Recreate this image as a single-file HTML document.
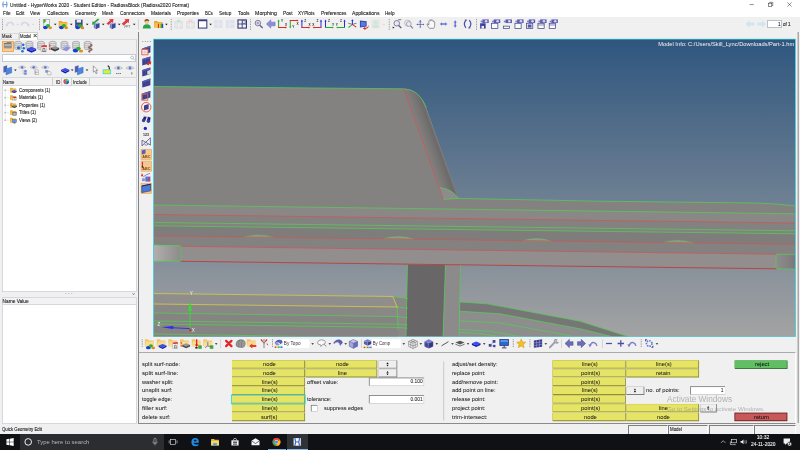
<!DOCTYPE html>
<html lang="en"><head><meta charset="utf-8"><title>Untitled - HyperWorks 2020 - Student Edition - RadiossBlock (Radioss2020 Format)</title>
<style>
html,body{margin:0;padding:0}
body{width:800px;height:450px;overflow:hidden;position:relative;background:#f0f0f0;font-family:"Liberation Sans",sans-serif}
.t{position:absolute;white-space:nowrap;line-height:1.15;transform-origin:0 50%;-webkit-text-stroke:0.1px currentColor}
.b{position:absolute;box-sizing:border-box}
svg{position:absolute;left:0;top:0;overflow:visible}
.yb{background:#e6e464;border-top:0.6px solid #f4f3b0;border-left:0.6px solid #f4f3b0;border-bottom:0.8px solid #8e8d3c;border-right:0.8px solid #8e8d3c}
.gb{background:#efefef;border-top:0.6px solid #fff;border-left:0.6px solid #fff;border-bottom:0.8px solid #777;border-right:0.8px solid #777}
.inp{background:#fff;border-top:0.8px solid #666;border-left:0.8px solid #666;border-bottom:0.6px solid #ddd;border-right:0.6px solid #ddd}
#root{position:absolute;left:0;top:0;width:800px;height:450px;will-change:transform}
</style></head><body><div id="root">
<div class="b" style="left:0px;top:0px;width:800px;height:17.2px;background:#ffffff;"></div>
<div class="t" style="left:10.30px;top:3.11px;font-size:5.2px;color:#1a1a1a;transform:scaleX(0.9302);">Untitled - HyperWorks 2020 - Student Edition - RadiossBlock (Radioss2020 Format)</div>
<div class="t" style="left:3.00px;top:11.31px;font-size:5.2px;color:#1a1a1a;transform:scaleX(0.8951);">File</div>
<div class="t" style="left:16.30px;top:11.31px;font-size:5.2px;color:#1a1a1a;transform:scaleX(0.9263);">Edit</div>
<div class="t" style="left:30.30px;top:11.31px;font-size:5.2px;color:#1a1a1a;transform:scaleX(0.9125);">View</div>
<div class="t" style="left:47.00px;top:11.31px;font-size:5.2px;color:#1a1a1a;transform:scaleX(0.9430);">Collectors</div>
<div class="t" style="left:74.50px;top:11.31px;font-size:5.2px;color:#1a1a1a;transform:scaleX(0.9418);">Geometry</div>
<div class="t" style="left:102.30px;top:11.31px;font-size:5.2px;color:#1a1a1a;transform:scaleX(0.9044);">Mesh</div>
<div class="t" style="left:120.00px;top:11.31px;font-size:5.2px;color:#1a1a1a;transform:scaleX(0.9401);">Connectors</div>
<div class="t" style="left:151.30px;top:11.31px;font-size:5.2px;color:#1a1a1a;transform:scaleX(0.9481);">Materials</div>
<div class="t" style="left:177.00px;top:11.31px;font-size:5.2px;color:#1a1a1a;transform:scaleX(0.9282);">Properties</div>
<div class="t" style="left:205.00px;top:11.31px;font-size:5.2px;color:#1a1a1a;transform:scaleX(0.8143);">BCs</div>
<div class="t" style="left:219.30px;top:11.31px;font-size:5.2px;color:#1a1a1a;transform:scaleX(0.9051);">Setup</div>
<div class="t" style="left:237.50px;top:11.31px;font-size:5.2px;color:#1a1a1a;transform:scaleX(0.9473);">Tools</div>
<div class="t" style="left:255.00px;top:11.31px;font-size:5.2px;color:#1a1a1a;transform:scaleX(1.0148);">Morphing</div>
<div class="t" style="left:283.00px;top:11.31px;font-size:5.2px;color:#1a1a1a;transform:scaleX(0.9130);">Post</div>
<div class="t" style="left:298.30px;top:11.31px;font-size:5.2px;color:#1a1a1a;transform:scaleX(0.8920);">XYPlots</div>
<div class="t" style="left:321.00px;top:11.31px;font-size:5.2px;color:#1a1a1a;transform:scaleX(0.9095);">Preferences</div>
<div class="t" style="left:352.00px;top:11.31px;font-size:5.2px;color:#1a1a1a;transform:scaleX(0.9807);">Applications</div>
<div class="t" style="left:385.30px;top:11.31px;font-size:5.2px;color:#1a1a1a;transform:scaleX(0.8883);">Help</div>
<div class="b" style="left:0px;top:39.2px;width:137.2px;height:385px;background:#f0f0f0;border-top:0.7px solid #d9dde3;border-right:0.7px solid #d0d4da;"></div>
<div class="b" style="left:0.8px;top:32.6px;width:18.5px;height:6.8px;background:#f0f0f0;border:0.6px solid #d9d9d9;border-bottom:none"></div>
<div class="b" style="left:19.2px;top:32.0px;width:19.2px;height:7.8px;background:#ffffff;border:0.6px solid #d0d0d0;border-bottom:none"></div>
<div class="t" style="left:1.80px;top:33.73px;font-size:5.0px;color:#222;transform:scaleX(0.8120);">Mask</div>
<div class="t" style="left:20.20px;top:33.73px;font-size:5.0px;color:#222;transform:scaleX(0.8224);">Model</div>
<div class="t" style="left:32.90px;top:31.95px;font-size:7.4px;color:#333;">×</div>
<div class="b" style="left:2.2px;top:40.7px;width:11.5px;height:11.2px;background:#f8cd96;border:0.7px solid #eeaa5c"></div>
<div class="b" style="left:1.8px;top:53.9px;width:134px;height:8.0px;background:#ffffff;border:0.7px solid #c3cad4"></div>
<div class="b" style="left:1.6px;top:77.2px;width:135px;height:8.6px;background:#f2f2f2;border:0.6px solid #d5d9df"></div>
<div class="b" style="left:51.5px;top:77.6px;width:0.6px;height:8px;background:#d0d0d0;"></div>
<div class="b" style="left:61.3px;top:77.6px;width:0.6px;height:8px;background:#d0d0d0;"></div>
<div class="b" style="left:71.0px;top:77.6px;width:0.6px;height:8px;background:#d0d0d0;"></div>
<div class="b" style="left:88.6px;top:77.6px;width:0.6px;height:8px;background:#d0d0d0;"></div>
<div class="t" style="left:2.80px;top:79.94px;font-size:4.8px;color:#222;transform:scaleX(0.8981);">Name</div>
<div class="t" style="left:56.00px;top:79.94px;font-size:4.8px;color:#222;transform:scaleX(0.8958);">ID</div>
<div class="t" style="left:73.20px;top:79.94px;font-size:4.8px;color:#222;transform:scaleX(0.9045);">Include</div>
<div class="b" style="left:1.6px;top:85.8px;width:135px;height:206.4px;background:#ffffff;border:0.6px solid #d5d9df;border-top:none"></div>
<div class="t" style="left:18.60px;top:87.61px;font-size:5.2px;color:#222;transform:scaleX(0.8368);">Components (1)</div>
<div class="t" style="left:18.60px;top:95.11px;font-size:5.2px;color:#222;transform:scaleX(0.8306);">Materials (1)</div>
<div class="t" style="left:18.60px;top:102.61px;font-size:5.2px;color:#222;transform:scaleX(0.8254);">Properties (1)</div>
<div class="t" style="left:18.60px;top:110.11px;font-size:5.2px;color:#222;transform:scaleX(0.8487);">Titles (1)</div>
<div class="t" style="left:18.60px;top:117.61px;font-size:5.2px;color:#222;transform:scaleX(0.8342);">Views (2)</div>
<div class="b" style="left:1.6px;top:292.2px;width:135px;height:4.6px;background:#f0f0f0;"></div>
<div class="t" style="left:65.00px;top:290.52px;font-size:5px;color:#555;">· · ·</div>
<div class="b" style="left:1.6px;top:296.6px;width:135px;height:8.6px;background:#f2f2f2;border:0.6px solid #d5d9df"></div>
<div class="t" style="left:2.60px;top:298.64px;font-size:4.8px;color:#222;">Name Value</div>
<div class="b" style="left:1.6px;top:305.2px;width:135px;height:119.2px;background:#ffffff;border:0.6px solid #d5d9df;border-top:none"></div>
<div class="b" style="left:138.1px;top:32px;width:0.9px;height:392px;background:#858585;"></div>
<svg width="800" height="450" viewBox="0 0 800 450">
<defs>
<linearGradient id="bg" x1="0" y1="0" x2="0" y2="1">
<stop offset="0" stop-color="#2f567f"/><stop offset="1" stop-color="#a3a3a3"/>
</linearGradient>
<linearGradient id="fil" gradientUnits="userSpaceOnUse" x1="422" y1="140" x2="436.2" y2="134.9">
<stop offset="0" stop-color="#838180"/><stop offset="0.5" stop-color="#777574"/><stop offset="0.85" stop-color="#6c6a69"/><stop offset="0.96" stop-color="#7b7978"/><stop offset="1" stop-color="#8e8c8b"/>
</linearGradient>
<linearGradient id="sb" x1="0" y1="0" x2="1" y2="0"><stop offset="0" stop-color="#b0afae"/><stop offset="1" stop-color="#8d8b8a"/></linearGradient>
<linearGradient id="sb2" x1="0" y1="0" x2="1" y2="0"><stop offset="0" stop-color="#8e8c8c"/><stop offset="1" stop-color="#7a7878"/></linearGradient>
<clipPath id="vp"><rect x="154" y="39.6" width="641" height="296.6"/></clipPath>
</defs>
<rect x="153.2" y="38.8" width="642.6" height="298" fill="#33c3d3"/>
<rect x="797.7" y="32" width="0.9" height="391" fill="#7c7c7c"/>
<rect x="154" y="39.6" width="641" height="296.6" fill="url(#bg)"/>
<g clip-path="url(#vp)" fill="none" stroke-linecap="round">
<!-- main surfaces -->
<path d="M154,86.5 L403.7,88.8 Q419,89 426,107 L458.5,198.4 L600,201.2 L757,203 Q782,204 796,206.2 L796,269 L776,268.7 L181,261.2 L154,261 Z" fill="#848280"/>
<!-- fillet -->
<path d="M403.7,88.8 Q419,89 426,107 L458.5,198.4 Q452,189 439.2,187.2 Z" fill="url(#fil)"/>
<path d="M439.2,187.2 Q452,189 458.5,198.4 L443.2,199.4 Z" fill="#8c8c8c"/>
<!-- strips -->
<path d="M154,205 L796,213.8 L796,223 L154,214.5 Z" fill="#8a8886"/>
<path d="M154,225.8 L796,233.8 L796,244.3 L154,235.8 Z" fill="#7f7d7b"/>
<path d="M181,246.3 L776,254.2 L776,268.7 L181,261.2 Z" fill="#918e8d"/>
<rect x="154" y="245" width="27" height="16.3" fill="url(#sb)"/>
<rect x="776" y="254.2" width="20" height="14.6" fill="url(#sb2)"/>
<!-- lower-left surfaces -->
<path d="M154,293.5 L393,296.5 L407.5,298.5 L406,337 L154,337 Z" fill="#8a8886"/>
<path d="M154,293.5 L393,296.5 L397,307 L154,304 Z" fill="#908e8c"/>
<path d="M154,313 L398,316.6 L398,337 L154,337 Z" fill="#868482"/>
<!-- pillar -->
<path d="M407.5,264.4 L445.5,264.9 L443,337 L406,337 Z" fill="#686666"/>
<path d="M445.5,264.9 L460.5,265.1 L459,337 L443,337 Z" fill="#8c8a8a"/>
<!-- right curved surfaces -->
<path d="M460,302 L487,303.8 L580,321.2 L628,336.6 L459,337 Z" fill="#8e8d8d"/>
<path d="M460,302 L487,303.8 L580,321.2 L628,336.6 L612,336.6 L580,328.8 L500,313.8 L460,311.2 Z" fill="#777676"/>
<!-- bumps -->
<path d="M244.5,237 Q259,232.6 273.5,237.4 Z" fill="#96968f" stroke="#62c862" stroke-width="0.45"/>
<path d="M384,238.6 Q398.5,234.4 413,239 Z" fill="#96968f" stroke="#62c862" stroke-width="0.45"/>
<path d="M523.5,240.6 Q537,236.4 550.5,241 Z" fill="#96968f" stroke="#62c862" stroke-width="0.45"/>
<path d="M663.5,242.4 Q678,238.2 693,242.8 Z" fill="#96968f" stroke="#62c862" stroke-width="0.45"/>
<!-- green lines -->
<g stroke="#56cc56" stroke-width="0.75">
<path d="M154,86.5 L403.7,88.8 Q419,89 426,107"/>
<path d="M439.2,187.2 Q452,189 458.5,198.4"/>
<path d="M443.2,199.4 L458.5,198.4 L600,201.2 L757,203 Q782,204 796,206.2"/>
<path d="M154,205 L796,213.8"/>
<path d="M154,222.5 L796,230.8"/>
<path d="M154,225.8 L796,233.8"/>
<path d="M154,245 L181,246.3 L181,261.2 L154,261"/>
<path d="M796,254.4 L776,254.2 L776,268.7 L796,269"/>
<path d="M393,296.5 L407.5,298.5 M397,307 L407.5,308.2 M397,307 L398,329"/>
<path d="M154,313 L398,316.6 L407,317.6"/>
<path d="M154,321 L398,324.2 L407,325"/>
<path d="M154,324 L398,327.4 L407,328.2"/>
<path d="M154,334 L300,336.4"/>
<path d="M407.5,264.4 L406,337 M445.5,264.9 L443,337 M460.5,265.1 L459,337"/>
<path d="M460,302 L487,303.8 L580,321.2 L628,336.6"/>
<path d="M460,311.2 L500,313.8 L580,328.8 L612,336.6"/>
<path d="M460,320.8 L500,323 L560,333.8 L575,337"/>
<path d="M460,329.5 L490,331.2 L520,336.5"/>
<path d="M460,332.5 L480,333.6 L500,336.6"/>
</g>
<!-- red lines -->
<g stroke="#cc5555" stroke-width="0.75">
<path d="M403.7,88.8 L439.2,187.2 L443.2,199.4"/>
<path d="M154,214.5 L796,223"/>
<path d="M154,235.8 L796,244.3"/>
<path d="M181,246.3 L776,254.2"/>
<path d="M181,261.3 L776,268.8" stroke="#b84646" stroke-width="1"/>
</g>
<!-- yellow lines -->
<g stroke="#d0ca4e" stroke-width="0.85">
<path d="M154,293.5 L393,296.5 L397,307"/>
<path d="M154,304 L397,307"/>
</g>
<!-- triad -->
<path d="M190,330 L190,305" stroke="#2fe02f" stroke-width="0.9"/>
<path d="M190,300.6 L188.2,311 L191.8,311 Z" fill="#2fe02f"/>
<path d="M189.4,328.6 L170,327.6" stroke="#2a2af0" stroke-width="0.9"/>
<path d="M161.6,327.3 L173.2,325.9 L173.2,329.0 Z" fill="#2a2af0"/>
<circle cx="190.2" cy="330.2" r="1.1" fill="#e02020"/>
</g>
<g font-family="Liberation Sans, sans-serif" font-size="4.6" fill="#f4f4f4">
<text x="189.8" y="295.4">Y</text><text x="157.6" y="325.6">Z</text><text x="191.8" y="332.2">X</text>
<text x="658.2" y="45.6" font-size="5" textLength="136" lengthAdjust="spacingAndGlyphs">Model Info: C:/Users/Skill_Lync/Downloads/Part-1.hm</text>
</g>
</svg>

<div class="b" style="left:139.0px;top:352.4px;width:657px;height:71.8px;background:#f0f0f0;border-top:0.8px solid #ababab;border-bottom:0.8px solid #8a8a8a;border-right:0.8px solid #fff"></div>
<svg width="800" height="450" viewBox="0 0 800 450"><rect x="231.55" y="359.95" width="72.75" height="8.0" fill="#f3f2a8"/><rect x="232.0" y="360.4" width="73.05" height="8.3" fill="#807f30"/><rect x="232.0" y="360.4" width="72.3" height="7.4" fill="#e6e464"/><rect x="231.55" y="368.7" width="72.75" height="8.0" fill="#f3f2a8"/><rect x="232.0" y="369.15" width="73.05" height="8.3" fill="#807f30"/><rect x="232.0" y="369.15" width="72.3" height="7.4" fill="#e6e464"/><rect x="231.55" y="377.45" width="72.75" height="8.0" fill="#f3f2a8"/><rect x="232.0" y="377.9" width="73.05" height="8.3" fill="#807f30"/><rect x="232.0" y="377.9" width="72.3" height="7.4" fill="#e6e464"/><rect x="231.55" y="386.2" width="72.75" height="8.0" fill="#f3f2a8"/><rect x="232.0" y="386.65" width="73.05" height="8.3" fill="#807f30"/><rect x="232.0" y="386.65" width="72.3" height="7.4" fill="#e6e464"/><rect x="231.55" y="394.95" width="72.75" height="8.0" fill="#f3f2a8"/><rect x="232.0" y="395.4" width="73.05" height="8.3" fill="#807f30"/><rect x="232.0" y="395.4" width="72.3" height="7.4" fill="#e6e464"/><rect x="231.55" y="403.7" width="72.75" height="8.0" fill="#f3f2a8"/><rect x="232.0" y="404.15" width="73.05" height="8.3" fill="#807f30"/><rect x="232.0" y="404.15" width="72.3" height="7.4" fill="#e6e464"/><rect x="231.55" y="412.45" width="72.75" height="8.0" fill="#f3f2a8"/><rect x="232.0" y="412.9" width="73.05" height="8.3" fill="#807f30"/><rect x="232.0" y="412.9" width="72.3" height="7.4" fill="#e6e464"/><rect x="231.4" y="394.9" width="73.8" height="9.0" fill="none" stroke="#2fd6d6" stroke-width="0.9"/><rect x="305.15000000000003" y="359.95" width="71.35000000000001" height="8.0" fill="#f3f2a8"/><rect x="305.6" y="360.4" width="71.65" height="8.3" fill="#807f30"/><rect x="305.6" y="360.4" width="70.9" height="7.4" fill="#e6e464"/><rect x="378.15000000000003" y="359.95" width="18.349999999999998" height="8.0" fill="#ffffff"/><rect x="378.6" y="360.4" width="18.65" height="8.3" fill="#6f6f6f"/><rect x="378.6" y="360.4" width="17.9" height="7.4" fill="#efefef"/><path d="M387.55,362.2 l1.1,1.7 h-2.2z M387.55,366.4 l1.1,-1.7 h-2.2z" fill="#111"/><rect x="305.15000000000003" y="368.7" width="71.35000000000001" height="8.0" fill="#f3f2a8"/><rect x="305.6" y="369.15" width="71.65" height="8.3" fill="#807f30"/><rect x="305.6" y="369.15" width="70.9" height="7.4" fill="#e6e464"/><rect x="378.15000000000003" y="368.7" width="18.349999999999998" height="8.0" fill="#ffffff"/><rect x="378.6" y="369.15" width="18.65" height="8.3" fill="#6f6f6f"/><rect x="378.6" y="369.15" width="17.9" height="7.4" fill="#efefef"/><path d="M387.55,370.95 l1.1,1.7 h-2.2z M387.55,375.15 l1.1,-1.7 h-2.2z" fill="#111"/><rect x="368.90000000000003" y="377.6" width="55.400000000000006" height="8.6" fill="#e2e2e2"/><rect x="368.90000000000003" y="377.6" width="54.900000000000006" height="8.1" fill="#6a6a6a"/><rect x="369.6" y="378.3" width="54.2" height="7.4" fill="#ffffff"/><rect x="368.90000000000003" y="395.1" width="55.400000000000006" height="8.6" fill="#e2e2e2"/><rect x="368.90000000000003" y="395.1" width="54.900000000000006" height="8.1" fill="#6a6a6a"/><rect x="369.6" y="395.8" width="54.2" height="7.4" fill="#ffffff"/><rect x="310.90000000000003" y="404.95" width="6.8" height="6.8" fill="#e2e2e2"/><rect x="310.90000000000003" y="404.95" width="6.3" height="6.3" fill="#6a6a6a"/><rect x="311.6" y="405.65" width="5.6" height="5.6" fill="#ffffff"/><rect x="443.5" y="361.5" width="0.6" height="59" fill="#b0b0b0"/><rect x="552.15" y="359.95" width="72.85000000000001" height="8.0" fill="#f3f2a8"/><rect x="552.6" y="360.4" width="73.15" height="8.3" fill="#807f30"/><rect x="552.6" y="360.4" width="72.4" height="7.4" fill="#e6e464"/><rect x="552.15" y="368.7" width="72.85000000000001" height="8.0" fill="#f3f2a8"/><rect x="552.6" y="369.15" width="73.15" height="8.3" fill="#807f30"/><rect x="552.6" y="369.15" width="72.4" height="7.4" fill="#e6e464"/><rect x="552.15" y="377.45" width="72.85000000000001" height="8.0" fill="#f3f2a8"/><rect x="552.6" y="377.9" width="73.15" height="8.3" fill="#807f30"/><rect x="552.6" y="377.9" width="72.4" height="7.4" fill="#e6e464"/><rect x="552.15" y="386.2" width="72.85000000000001" height="8.0" fill="#f3f2a8"/><rect x="552.6" y="386.65" width="73.15" height="8.3" fill="#807f30"/><rect x="552.6" y="386.65" width="72.4" height="7.4" fill="#e6e464"/><rect x="552.15" y="394.95" width="72.85000000000001" height="8.0" fill="#f3f2a8"/><rect x="552.6" y="395.4" width="73.15" height="8.3" fill="#807f30"/><rect x="552.6" y="395.4" width="72.4" height="7.4" fill="#e6e464"/><rect x="552.15" y="403.7" width="72.85000000000001" height="8.0" fill="#f3f2a8"/><rect x="552.6" y="404.15" width="73.15" height="8.3" fill="#807f30"/><rect x="552.6" y="404.15" width="72.4" height="7.4" fill="#e6e464"/><rect x="552.15" y="412.45" width="72.85000000000001" height="8.0" fill="#f3f2a8"/><rect x="552.6" y="412.9" width="73.15" height="8.3" fill="#807f30"/><rect x="552.6" y="412.9" width="72.4" height="7.4" fill="#e6e464"/><rect x="625.8499999999999" y="359.95" width="72.45" height="8.0" fill="#f3f2a8"/><rect x="626.3" y="360.4" width="72.75" height="8.3" fill="#807f30"/><rect x="626.3" y="360.4" width="72" height="7.4" fill="#e6e464"/><rect x="625.8499999999999" y="368.7" width="72.45" height="8.0" fill="#f3f2a8"/><rect x="626.3" y="369.15" width="72.75" height="8.3" fill="#807f30"/><rect x="626.3" y="369.15" width="72" height="7.4" fill="#e6e464"/><rect x="625.8499999999999" y="403.7" width="72.45" height="8.0" fill="#f3f2a8"/><rect x="626.3" y="404.15" width="72.75" height="8.3" fill="#807f30"/><rect x="626.3" y="404.15" width="72" height="7.4" fill="#e6e464"/><rect x="625.8499999999999" y="412.45" width="72.45" height="8.0" fill="#f3f2a8"/><rect x="626.3" y="412.9" width="72.75" height="8.3" fill="#807f30"/><rect x="626.3" y="412.9" width="72" height="7.4" fill="#e6e464"/><rect x="625.8499999999999" y="386.2" width="17.75" height="8.0" fill="#ffffff"/><rect x="626.3" y="386.65" width="18.05" height="8.3" fill="#6f6f6f"/><rect x="626.3" y="386.65" width="17.3" height="7.4" fill="#efefef"/><path d="M634.9499999999999,388.45 l1.1,1.7 h-2.2z M634.9499999999999,392.65 l1.1,-1.7 h-2.2z" fill="#111"/><rect x="699.9499999999999" y="403.7" width="16.05" height="8.0" fill="#ffffff"/><rect x="700.4" y="404.15" width="16.35" height="8.3" fill="#6f6f6f"/><rect x="700.4" y="404.15" width="15.6" height="7.4" fill="#efefef"/><path d="M708.1999999999999,405.95 l1.1,1.7 h-2.2z M708.1999999999999,410.15 l1.1,-1.7 h-2.2z" fill="#111"/><rect x="690.0999999999999" y="386.35" width="35.400000000000006" height="8.6" fill="#e2e2e2"/><rect x="690.0999999999999" y="386.35" width="34.900000000000006" height="8.1" fill="#6a6a6a"/><rect x="690.8" y="387.05" width="34.2" height="7.4" fill="#ffffff"/><rect x="734.3499999999999" y="360.15" width="52.45" height="8.0" fill="#b4e6b5"/><rect x="734.8" y="360.59999999999997" width="52.75" height="8.3" fill="#2f6a31"/><rect x="734.8" y="360.59999999999997" width="52" height="7.4" fill="#5fbf62"/><rect x="734.4" y="412.6" width="53" height="8.6" fill="#6a2224"/><rect x="735.3" y="413.5" width="51.2" height="6.8" fill="#c8595b"/></svg>
<div class="t" style="left:141.90px;top:361.05px;font-size:6.0px;color:#1a1a1a;transform:scaleX(0.9656);-webkit-text-stroke:0.04px currentColor">split surf-node:</div>
<div class="t" style="left:262.99px;top:361.05px;font-size:6.0px;color:#1a1a1a;transform:scaleX(0.9600);-webkit-text-stroke:0.04px currentColor">node</div>
<div class="t" style="left:141.90px;top:369.80px;font-size:6.0px;color:#1a1a1a;transform:scaleX(1.0327);-webkit-text-stroke:0.04px currentColor">split surf-line:</div>
<div class="t" style="left:262.99px;top:369.80px;font-size:6.0px;color:#1a1a1a;transform:scaleX(0.9600);-webkit-text-stroke:0.04px currentColor">node</div>
<div class="t" style="left:141.90px;top:378.55px;font-size:6.0px;color:#1a1a1a;transform:scaleX(0.9446);-webkit-text-stroke:0.04px currentColor">washer split:</div>
<div class="t" style="left:261.56px;top:378.55px;font-size:6.0px;color:#1a1a1a;transform:scaleX(0.9600);-webkit-text-stroke:0.04px currentColor">line(s)</div>
<div class="t" style="left:141.90px;top:387.30px;font-size:6.0px;color:#1a1a1a;transform:scaleX(0.9941);-webkit-text-stroke:0.04px currentColor">unsplit surf:</div>
<div class="t" style="left:261.56px;top:387.30px;font-size:6.0px;color:#1a1a1a;transform:scaleX(0.9600);-webkit-text-stroke:0.04px currentColor">line(s)</div>
<div class="t" style="left:141.90px;top:396.05px;font-size:6.0px;color:#1a1a1a;transform:scaleX(0.9083);-webkit-text-stroke:0.04px currentColor">toggle edge:</div>
<div class="t" style="left:261.56px;top:396.05px;font-size:6.0px;color:#1a1a1a;transform:scaleX(0.9600);-webkit-text-stroke:0.04px currentColor">line(s)</div>
<div class="t" style="left:141.90px;top:404.80px;font-size:6.0px;color:#1a1a1a;transform:scaleX(1.0478);-webkit-text-stroke:0.04px currentColor">filler surf:</div>
<div class="t" style="left:261.56px;top:404.80px;font-size:6.0px;color:#1a1a1a;transform:scaleX(0.9600);-webkit-text-stroke:0.04px currentColor">line(s)</div>
<div class="t" style="left:141.90px;top:413.55px;font-size:6.0px;color:#1a1a1a;transform:scaleX(0.9601);-webkit-text-stroke:0.04px currentColor">delete surf:</div>
<div class="t" style="left:261.24px;top:413.55px;font-size:6.0px;color:#1a1a1a;transform:scaleX(0.9600);-webkit-text-stroke:0.04px currentColor">surf(s)</div>
<div class="t" style="left:336.09px;top:361.05px;font-size:6.0px;color:#1a1a1a;transform:scaleX(0.9600);-webkit-text-stroke:0.04px currentColor">node</div>
<div class="t" style="left:338.02px;top:369.80px;font-size:6.0px;color:#1a1a1a;transform:scaleX(0.9600);-webkit-text-stroke:0.04px currentColor">line</div>
<div class="t" style="left:306.60px;top:378.55px;font-size:6.0px;color:#1a1a1a;transform:scaleX(0.9769);-webkit-text-stroke:0.04px currentColor">offset value:</div>
<div class="t" style="left:306.60px;top:396.05px;font-size:6.0px;color:#1a1a1a;transform:scaleX(0.9298);-webkit-text-stroke:0.04px currentColor">tolerance:</div>
<div class="t" style="left:410.54px;top:379.38px;font-size:4.9px;color:#1a1a1a;-webkit-text-stroke:0.04px currentColor">0.100</div>
<div class="t" style="left:410.54px;top:396.88px;font-size:4.9px;color:#1a1a1a;-webkit-text-stroke:0.04px currentColor">0.001</div>
<div class="t" style="left:323.80px;top:404.80px;font-size:6.0px;color:#1a1a1a;transform:scaleX(0.9206);-webkit-text-stroke:0.04px currentColor">suppress edges</div>
<div class="t" style="left:452.40px;top:361.05px;font-size:6.0px;color:#1a1a1a;transform:scaleX(0.9474);-webkit-text-stroke:0.04px currentColor">adjust/set density:</div>
<div class="t" style="left:582.36px;top:361.05px;font-size:6.0px;color:#1a1a1a;transform:scaleX(0.9600);-webkit-text-stroke:0.04px currentColor">line(s)</div>
<div class="t" style="left:452.40px;top:369.80px;font-size:6.0px;color:#1a1a1a;transform:scaleX(0.9299);-webkit-text-stroke:0.04px currentColor">replace point:</div>
<div class="t" style="left:580.60px;top:369.80px;font-size:6.0px;color:#1a1a1a;transform:scaleX(0.9600);-webkit-text-stroke:0.04px currentColor">point(s)</div>
<div class="t" style="left:452.40px;top:378.55px;font-size:6.0px;color:#1a1a1a;transform:scaleX(0.9577);-webkit-text-stroke:0.04px currentColor">add/remove point:</div>
<div class="t" style="left:580.60px;top:378.55px;font-size:6.0px;color:#1a1a1a;transform:scaleX(0.9600);-webkit-text-stroke:0.04px currentColor">point(s)</div>
<div class="t" style="left:452.40px;top:387.30px;font-size:6.0px;color:#1a1a1a;transform:scaleX(0.9518);-webkit-text-stroke:0.04px currentColor">add point on line:</div>
<div class="t" style="left:582.36px;top:387.30px;font-size:6.0px;color:#1a1a1a;transform:scaleX(0.9600);-webkit-text-stroke:0.04px currentColor">line(s)</div>
<div class="t" style="left:452.40px;top:396.05px;font-size:6.0px;color:#1a1a1a;transform:scaleX(0.9299);-webkit-text-stroke:0.04px currentColor">release point:</div>
<div class="t" style="left:580.60px;top:396.05px;font-size:6.0px;color:#1a1a1a;transform:scaleX(0.9600);-webkit-text-stroke:0.04px currentColor">point(s)</div>
<div class="t" style="left:452.40px;top:404.80px;font-size:6.0px;color:#1a1a1a;transform:scaleX(0.9751);-webkit-text-stroke:0.04px currentColor">project point:</div>
<div class="t" style="left:580.60px;top:404.80px;font-size:6.0px;color:#1a1a1a;transform:scaleX(0.9600);-webkit-text-stroke:0.04px currentColor">point(s)</div>
<div class="t" style="left:452.40px;top:413.55px;font-size:6.0px;color:#1a1a1a;transform:scaleX(0.9769);-webkit-text-stroke:0.04px currentColor">trim-intersect:</div>
<div class="t" style="left:583.79px;top:413.55px;font-size:6.0px;color:#1a1a1a;transform:scaleX(0.9600);-webkit-text-stroke:0.04px currentColor">node</div>
<div class="t" style="left:655.66px;top:361.05px;font-size:6.0px;color:#1a1a1a;transform:scaleX(0.9600);-webkit-text-stroke:0.04px currentColor">line(s)</div>
<div class="t" style="left:656.30px;top:369.80px;font-size:6.0px;color:#1a1a1a;transform:scaleX(0.9600);-webkit-text-stroke:0.04px currentColor">retain</div>
<div class="t" style="left:659.02px;top:404.80px;font-size:6.0px;color:#1a1a1a;transform:scaleX(0.9600);-webkit-text-stroke:0.04px currentColor">line</div>
<div class="t" style="left:657.09px;top:413.55px;font-size:6.0px;color:#1a1a1a;transform:scaleX(0.9600);-webkit-text-stroke:0.04px currentColor">node</div>
<div class="t" style="left:646.00px;top:387.30px;font-size:6.0px;color:#1a1a1a;transform:scaleX(0.9751);-webkit-text-stroke:0.04px currentColor">no. of points:</div>
<div class="t" style="left:720.87px;top:388.13px;font-size:4.9px;color:#1a1a1a;-webkit-text-stroke:0.04px currentColor">1</div>
<div class="t" style="left:754.66px;top:361.15px;font-size:6.0px;color:#111;transform:scaleX(0.9600);-webkit-text-stroke:0.04px currentColor">reject</div>
<div class="t" style="left:754.18px;top:413.55px;font-size:6.0px;color:#111;transform:scaleX(0.9600);-webkit-text-stroke:0.04px currentColor">return</div>
<div class="t" style="left:666.50px;top:395.17px;font-size:8.4px;color:rgba(150,150,150,0.7);transform:scaleX(0.9836);-webkit-text-stroke:0">Activate Windows</div>
<div class="t" style="left:666.50px;top:405.84px;font-size:5.5px;color:rgba(150,150,150,0.7);transform:scaleX(1.1265);-webkit-text-stroke:0">Go to Settings to activate Windows.</div>
<div class="t" style="left:1.60px;top:426.66px;font-size:4.6px;color:#222;transform:scaleX(0.9426);">Quick Geometry Edit</div>
<div class="b" style="left:628.2px;top:425.2px;width:40px;height:8.6px;background:#f1f1f1;border-top:0.8px solid #7d7d7d;border-left:0.8px solid #7d7d7d;border-right:0.5px solid #fff"></div>
<div class="b" style="left:668.4px;top:425.2px;width:40px;height:8.6px;background:#f1f1f1;border-top:0.8px solid #7d7d7d;border-left:0.8px solid #7d7d7d;border-right:0.5px solid #fff"></div>
<div class="b" style="left:708.6px;top:425.2px;width:45.4px;height:8.6px;background:#f1f1f1;border-top:0.8px solid #7d7d7d;border-left:0.8px solid #7d7d7d;border-right:0.5px solid #fff"></div>
<div class="b" style="left:754.2px;top:425.2px;width:42px;height:8.6px;background:#f1f1f1;border-top:0.8px solid #7d7d7d;border-left:0.8px solid #7d7d7d;border-right:0.5px solid #fff"></div>
<div class="t" style="left:669.60px;top:426.73px;font-size:5.0px;color:#222;transform:scaleX(0.8811);">Model</div>
<div class="b" style="left:0px;top:433.7px;width:800px;height:16.3px;background:#0f1114;"></div>
<div class="b" style="left:20px;top:433.7px;width:143.5px;height:16.3px;background:#2b2d30;"></div>
<div class="b" style="left:287px;top:433.7px;width:20.5px;height:16.3px;background:#2f3236;"></div>
<div class="b" style="left:268px;top:449.2px;width:18px;height:0.8px;background:#7aa7d6;"></div>
<div class="b" style="left:287px;top:449.2px;width:20.5px;height:0.8px;background:#8ab4e0;"></div>
<div class="t" style="left:37.20px;top:438.04px;font-size:6.2px;color:#b4b5b6;transform:scaleX(0.9580);-webkit-text-stroke:0">Type here to search</div>
<div class="t" style="left:756.75px;top:435.12px;font-size:5.0px;color:#f0f0f0;">10:32</div>
<div class="t" style="left:750.75px;top:442.32px;font-size:5.0px;color:#f0f0f0;transform:scaleX(0.9720);">24-11-2020</div>
<div class="b" style="left:767.4px;top:20.2px;width:14.6px;height:7.6px;background:#ffffff;border:0.6px solid #b9c0ca"></div>
<div class="t" style="left:778.04px;top:21.55px;font-size:4.6px;color:#222;">1</div>
<div class="t" style="left:782.60px;top:21.55px;font-size:4.6px;color:#222;transform:scaleX(0.9775);">of 1</div>
<svg width="800" height="450" viewBox="0 0 800 450">
<path d="M749.6,4.6 h4.2" stroke="#222" stroke-width="0.5" fill="none"/>
<rect x="768.6" y="3.2" width="3.2" height="3.2" fill="none" stroke="#222" stroke-width="0.5"/><path d="M769.6,3.2 v-0.9 h3.2 v3.2 h-1" fill="none" stroke="#222" stroke-width="0.5"/>
<path d="M787.4,2.4 l4.2,4.2 m0,-4.2 l-4.2,4.2" stroke="#222" stroke-width="0.5" fill="none"/>
<path d="M3.3,1.6 q-1.1,2.9 0,5.8 M6.5,1.6 q1.1,2.9 0,5.8 M3.1,4.6 h3.6" stroke="#3a74d0" stroke-width="0.8" fill="none"/>
<rect x="2.2" y="19.20" width="0.8" height="0.8" fill="#777"/>
<rect x="2.2" y="20.87" width="0.8" height="0.8" fill="#777"/>
<rect x="2.2" y="22.54" width="0.8" height="0.8" fill="#777"/>
<rect x="2.2" y="24.21" width="0.8" height="0.8" fill="#777"/>
<rect x="2.2" y="25.88" width="0.8" height="0.8" fill="#777"/>
<rect x="2.2" y="27.55" width="0.8" height="0.8" fill="#777"/>
<rect x="2.2" y="29.22" width="0.8" height="0.8" fill="#777"/>
<rect x="39.2" y="19.20" width="0.8" height="0.8" fill="#777"/>
<rect x="39.2" y="20.87" width="0.8" height="0.8" fill="#777"/>
<rect x="39.2" y="22.54" width="0.8" height="0.8" fill="#777"/>
<rect x="39.2" y="24.21" width="0.8" height="0.8" fill="#777"/>
<rect x="39.2" y="25.88" width="0.8" height="0.8" fill="#777"/>
<rect x="39.2" y="27.55" width="0.8" height="0.8" fill="#777"/>
<rect x="39.2" y="29.22" width="0.8" height="0.8" fill="#777"/>
<rect x="170.79999999999998" y="19.20" width="0.8" height="0.8" fill="#777"/>
<rect x="170.79999999999998" y="20.87" width="0.8" height="0.8" fill="#777"/>
<rect x="170.79999999999998" y="22.54" width="0.8" height="0.8" fill="#777"/>
<rect x="170.79999999999998" y="24.21" width="0.8" height="0.8" fill="#777"/>
<rect x="170.79999999999998" y="25.88" width="0.8" height="0.8" fill="#777"/>
<rect x="170.79999999999998" y="27.55" width="0.8" height="0.8" fill="#777"/>
<rect x="170.79999999999998" y="29.22" width="0.8" height="0.8" fill="#777"/>
<rect x="250.2" y="19.20" width="0.8" height="0.8" fill="#777"/>
<rect x="250.2" y="20.87" width="0.8" height="0.8" fill="#777"/>
<rect x="250.2" y="22.54" width="0.8" height="0.8" fill="#777"/>
<rect x="250.2" y="24.21" width="0.8" height="0.8" fill="#777"/>
<rect x="250.2" y="25.88" width="0.8" height="0.8" fill="#777"/>
<rect x="250.2" y="27.55" width="0.8" height="0.8" fill="#777"/>
<rect x="250.2" y="29.22" width="0.8" height="0.8" fill="#777"/>
<rect x="388.8" y="19.20" width="0.8" height="0.8" fill="#777"/>
<rect x="388.8" y="20.87" width="0.8" height="0.8" fill="#777"/>
<rect x="388.8" y="22.54" width="0.8" height="0.8" fill="#777"/>
<rect x="388.8" y="24.21" width="0.8" height="0.8" fill="#777"/>
<rect x="388.8" y="25.88" width="0.8" height="0.8" fill="#777"/>
<rect x="388.8" y="27.55" width="0.8" height="0.8" fill="#777"/>
<rect x="388.8" y="29.22" width="0.8" height="0.8" fill="#777"/>
<rect x="476.20000000000005" y="19.20" width="0.8" height="0.8" fill="#777"/>
<rect x="476.20000000000005" y="20.87" width="0.8" height="0.8" fill="#777"/>
<rect x="476.20000000000005" y="22.54" width="0.8" height="0.8" fill="#777"/>
<rect x="476.20000000000005" y="24.21" width="0.8" height="0.8" fill="#777"/>
<rect x="476.20000000000005" y="25.88" width="0.8" height="0.8" fill="#777"/>
<rect x="476.20000000000005" y="27.55" width="0.8" height="0.8" fill="#777"/>
<rect x="476.20000000000005" y="29.22" width="0.8" height="0.8" fill="#777"/>
<g transform="translate(10,24) scale(1.2)"><path d="M-2.8,1.6 q0.6,-3.4 3.6,-2.8 q2,0.5 2.2,2.6" stroke="#d3d5e8" stroke-width="1.3" fill="none"/><path d="M-4,0.2 l2.6,0.2 l-1.6,2.2z" fill="#d3d5e8"/></g>
<g transform="translate(25,24) scale(1.2)"><path d="M2.8,1.6 q-0.6,-3.4 -3.6,-2.8 q-2,0.5 -2.2,2.6" stroke="#d3d5e8" stroke-width="1.3" fill="none"/><path d="M4,0.2 l-2.6,0.2 l1.6,2.2z" fill="#d3d5e8"/></g>
<rect x="16.6" y="23.9" width="2" height="0.6" fill="#c4c4c4"/><rect x="32.2" y="23.9" width="2" height="0.6" fill="#c4c4c4"/>
<g transform="translate(47,24) scale(1.2)"><rect x="-2.6" y="-3.6" width="4.8" height="6.2" fill="#f4f4f4" stroke="#8a8f9c" stroke-width="0.5"/><path d="M-3.8,-3.4 l2.4,-0.6 l0.8,2.4 l-1,-0.4 l-0.8,1.4 l-1,-0.6 l0.8,-1.4z" fill="#3fae3a"/><g transform="translate(0.2,1.0) scale(0.95)"><ellipse cx="-1.6" cy="2.0" rx="2.1" ry="1.5" fill="#1b3bd8"/><ellipse cx="0.6" cy="0.4" rx="1.8" ry="1.4" fill="#25b52a"/><ellipse cx="2.6" cy="2.3" rx="1.6" ry="1.2" fill="#e38a17"/></g></g>
<path d="M53.900000000000006,23.799999999999997 h2.6 l-1.3,1.45z" fill="#1a1a1a"/>
<g transform="translate(63,24) scale(1.2)"><path d="M-3.6,-2.6 h2.6 l0.8,0.9 h3.6 v4.6 h-7z" fill="#e9a93a"/><path d="M-3.6,2.9 l1,-3.8 h6.6 l-1,3.8z" fill="#f3c14e"/><g transform="translate(0.2,1.0) scale(0.95)"><ellipse cx="-1.6" cy="2.0" rx="2.1" ry="1.5" fill="#1b3bd8"/><ellipse cx="0.6" cy="0.4" rx="1.8" ry="1.4" fill="#25b52a"/><ellipse cx="2.6" cy="2.3" rx="1.6" ry="1.2" fill="#e38a17"/></g></g>
<path d="M69.9,23.799999999999997 h2.6 l-1.3,1.45z" fill="#1a1a1a"/>
<g transform="translate(79,24) scale(1.2)"><rect x="-3.2" y="-3.6" width="6.2" height="6.4" fill="#3c4a82"/><rect x="-1.9" y="-3.6" width="3.6" height="2.4" fill="#e9ecf5"/><rect x="-2.2" y="0.2" width="4.2" height="2.6" fill="#5a67a0"/><g transform="translate(0.4,1.1) scale(0.95)"><ellipse cx="-1.6" cy="2.0" rx="2.1" ry="1.5" fill="#1b3bd8"/><ellipse cx="0.6" cy="0.4" rx="1.8" ry="1.4" fill="#25b52a"/><ellipse cx="2.6" cy="2.3" rx="1.6" ry="1.2" fill="#e38a17"/></g></g>
<path d="M85.9,23.799999999999997 h2.6 l-1.3,1.45z" fill="#1a1a1a"/>
<g transform="translate(95,24) scale(1.2)"><path d="M3.6,-3.6 l-3.4,2.6 l0.9,1 l-3.6,0.6 l0.6,-3.2 l0.9,0.9 l3.4,-2.8z" fill="#27a52c"/><g transform="translate(0.6,0.8)"><path d="M0,-0.6 l3.2,-1 v3.8 l-3.2,1.4z" fill="#3b4b9c"/><path d="M0,-0.6 l-1.6,-0.6 v3.6 l1.6,1z" fill="#6f7fc8"/><path d="M0,-0.6 l3.2,-1 l-1.6,-0.5 l-3.2,0.9z" fill="#9aa7e0"/></g></g>
<path d="M101.9,23.799999999999997 h2.6 l-1.3,1.45z" fill="#1a1a1a"/>
<g transform="translate(111,24) scale(1.2)"><path d="M-3.8,-0.4 l3,-2.6 l-0.9,-0.9 l3.8,-0.3 l-0.5,3.4 l-0.9,-0.9 l-3,2.6z" fill="#e23b3b"/><g transform="translate(0.6,0.8)"><path d="M0,-0.6 l3.2,-1 v3.8 l-3.2,1.4z" fill="#3b4b9c"/><path d="M0,-0.6 l-1.6,-0.6 v3.6 l1.6,1z" fill="#6f7fc8"/><path d="M0,-0.6 l3.2,-1 l-1.6,-0.5 l-3.2,0.9z" fill="#9aa7e0"/></g></g>
<path d="M117.9,23.799999999999997 h2.6 l-1.3,1.45z" fill="#1a1a1a"/>
<g transform="translate(126,24) scale(1.2)"><path d="M-3.6,-0.2 l3.2,-2.8 l-0.9,-0.9 l4,-0.3 l-0.5,3.6 l-0.9,-0.9 l-3.2,2.8z" fill="#e23b3b"/><text x="-1.2" y="3.6" font-size="2.4" font-family="Liberation Sans, sans-serif" fill="#444">PPT</text></g>
<path d="M132.89999999999998,23.799999999999997 h2.6 l-1.3,1.45z" fill="#1a1a1a"/>
<rect x="138.3" y="19.4" width="0.5" height="10" fill="#b5b5b5"/>
<g transform="translate(146.8,24) scale(1.2)"><path d="M-3.4,3.8 q0,-3.6 3.4,-3.6 q3.4,0 3.4,3.6z" fill="#27a548"/><circle cx="0" cy="-1.6" r="1.8" fill="#f0c49a"/><path d="M-2,-1.8 q0,-2.4 2,-2.4 q2.2,0 2,2.2 q-1.6,-1.4 -4,0.2z" fill="#8b4a1e"/></g>
<g transform="translate(158.4,24) scale(1.2)"><path d="M-3.6,-2.6 h2.6 l0.8,0.9 h3.6 v4.6 h-7z" fill="#e9a93a"/><path d="M-3.6,2.9 l1,-3.8 h6.6 l-1,3.8z" fill="#f3c14e"/><rect x="-0.4" y="-0.2" width="1.1" height="3.6" fill="#e03030"/><rect x="0.7" y="-0.2" width="1.1" height="3.6" fill="#e8d820"/><rect x="1.8" y="-0.2" width="1.1" height="3.6" fill="#28b030"/><rect x="2.9" y="-0.2" width="1.1" height="3.6" fill="#2848d8"/></g>
<path d="M165.1,23.799999999999997 h2.6 l-1.3,1.45z" fill="#1a1a1a"/>
<g transform="translate(178.6,24) scale(1.2)"><rect x="-3.2" y="-2" width="6.4" height="5.4" fill="#e3e5e8" stroke="#d0d3d8" stroke-width="0.4"/><path d="M0,-4 l1.6,1.6 l-1.6,1.6 l-1.6,-1.6z" fill="#bfe3bf"/><path d="M0,-2 v5.4 M-3.2,0.8 h6.4" stroke="#f3f3f3" stroke-width="0.5"/></g>
<g transform="translate(190.6,24) scale(1.2)"><rect x="-3.2" y="-2" width="6.4" height="5.4" fill="#e3e5e8" stroke="#d0d3d8" stroke-width="0.4"/><path d="M-1.6,-4 l3,3 m0,-3 l-3,3" stroke="#f2bcbc" stroke-width="0.8"/><path d="M0,-2 v5.4 M-3.2,0.8 h6.4" stroke="#f3f3f3" stroke-width="0.5"/></g>
<g transform="translate(202.6,24) scale(1.2)"><rect x="-3.5" y="-3.4" width="7" height="6.8" fill="#fdfdfd" stroke="#3a3d7c" stroke-width="0.9"/><rect x="-3.5" y="-3.4" width="7" height="1.1" fill="#3a3d7c"/></g>
<path d="M209.29999999999998,23.799999999999997 h2.6 l-1.3,1.45z" fill="#1a1a1a"/>
<g transform="translate(218.2,24) scale(1.2)"><rect x="-3.5" y="-3.4" width="7" height="6.8" fill="#dfe1ec"/><path d="M0,-3.4 v6.8 M-3.5,0 h7" stroke="#f1f1f6" stroke-width="0.6"/></g>
<g transform="translate(230.2,24) scale(1.2)"><rect x="-3.5" y="-3.4" width="7" height="6.8" fill="#dfe1ec"/><path d="M-0.8,-3.4 v6.8 M-0.8,0 h4.3" stroke="#f1f1f6" stroke-width="0.6"/></g>
<g transform="translate(242.2,24) scale(1.2)"><rect x="-3.5" y="-3.4" width="7" height="6.8" fill="#f4f5fa" stroke="#2f3270" stroke-width="0.9"/><path d="M0,-3.4 v6.8 M-3.5,0 h7" stroke="#2f3270" stroke-width="0.7"/><circle cx="1.4" cy="-1.6" r="1.3" fill="none" stroke="#555a8a" stroke-width="0.6"/></g>
<g transform="translate(258.6,24) scale(1.2)"><circle cx="-0.6" cy="-0.8" r="2.3" fill="#e4e4f0" stroke="#70708a" stroke-width="0.7"/><path d="M1,1 l2.4,2.4" stroke="#5c5c96" stroke-width="1.1"/><path d="M-1.8,-0.8 h2.4 M-0.6,-2 v2.4" stroke="#8a5a9a" stroke-width="0.5"/></g>
<g transform="translate(271,24) scale(1.2)"><path d="M-3.8,0 l3.6,-3.4 v1.9 h3.6 v3 h-3.6 v1.9z" fill="#8f8fd8" stroke="#5a5ab0" stroke-width="0.4"/></g>
<g transform="translate(282.5,24) scale(1.0)"><path d="M-3.9,-3.2 V3.5" stroke="#22b022" stroke-width="1"/><path d="M-4.4,3.5 H3.3" stroke="#e02828" stroke-width="1"/><path d="M-3.9,-4.4 l-1.1,1.8 h2.2z" fill="#22b022"/><path d="M4.5,3.5 l-1.8,-1.1 v2.2z" fill="#e02828"/><text x="-1.5" y="-1.9" font-size="3.2" font-weight="bold" font-family="Liberation Sans, sans-serif" fill="#333">Y</text><text x="2.5999999999999996" y="1.7" font-size="3.2" font-weight="bold" font-family="Liberation Sans, sans-serif" fill="#333">X</text></g>
<g transform="translate(294.2,24) scale(1.0)"><path d="M-3.9,-3.9 V3.2" stroke="#22b022" stroke-width="1"/><path d="M-4.4,-3.5 H3.3" stroke="#e02828" stroke-width="1"/><path d="M-3.9,4.4 l-1.1,-1.8 h2.2z" fill="#22b022"/><path d="M4.5,-3.5 l-1.8,-1.1 v2.2z" fill="#e02828"/><text x="2.1999999999999997" y="0.9" font-size="3.2" font-weight="bold" font-family="Liberation Sans, sans-serif" fill="#333">X</text><text x="-1.9" y="4.2" font-size="3.2" font-weight="bold" font-family="Liberation Sans, sans-serif" fill="#333">Y</text></g>
<g transform="translate(305.8,24) scale(1.0)"><path d="M-3.9,-3.2 V3.5" stroke="#2a2ad8" stroke-width="1"/><path d="M-4.4,3.5 H3.3" stroke="#e02828" stroke-width="1"/><path d="M-3.9,-4.4 l-1.1,1.8 h2.2z" fill="#2a2ad8"/><path d="M4.5,3.5 l-1.8,-1.1 v2.2z" fill="#e02828"/><text x="-1.5" y="-1.9" font-size="3.2" font-weight="bold" font-family="Liberation Sans, sans-serif" fill="#333">Z</text><text x="2.5999999999999996" y="1.7" font-size="3.2" font-weight="bold" font-family="Liberation Sans, sans-serif" fill="#333">X</text></g>
<g transform="translate(317.1,24) scale(1.0)"><path d="M3.9,-3.2 V3.5" stroke="#2a2ad8" stroke-width="1"/><path d="M4.4,3.5 H-3.3" stroke="#e02828" stroke-width="1"/><path d="M3.9,-4.4 l-1.1,1.8 h2.2z" fill="#2a2ad8"/><path d="M-4.5,3.5 l1.8,-1.1 v2.2z" fill="#e02828"/><text x="-0.5" y="-1.9" font-size="3.2" font-weight="bold" font-family="Liberation Sans, sans-serif" fill="#333">Z</text><text x="-4.8" y="1.7" font-size="3.2" font-weight="bold" font-family="Liberation Sans, sans-serif" fill="#333">X</text></g>
<g transform="translate(329.4,24) scale(1.0)"><path d="M-3.9,-3.2 V3.5" stroke="#2a2ad8" stroke-width="1"/><path d="M-4.4,3.5 H3.3" stroke="#22b022" stroke-width="1"/><path d="M-3.9,-4.4 l-1.1,1.8 h2.2z" fill="#2a2ad8"/><path d="M4.5,3.5 l-1.8,-1.1 v2.2z" fill="#22b022"/><text x="-1.5" y="-1.9" font-size="3.2" font-weight="bold" font-family="Liberation Sans, sans-serif" fill="#333">Z</text><text x="2.5999999999999996" y="1.7" font-size="3.2" font-weight="bold" font-family="Liberation Sans, sans-serif" fill="#333">Y</text></g>
<g transform="translate(340.6,24) scale(1.0)"><path d="M3.9,-3.2 V3.5" stroke="#2a2ad8" stroke-width="1"/><path d="M4.4,3.5 H-3.3" stroke="#22b022" stroke-width="1"/><path d="M3.9,-4.4 l-1.1,1.8 h2.2z" fill="#2a2ad8"/><path d="M-4.5,3.5 l1.8,-1.1 v2.2z" fill="#22b022"/><text x="-0.5" y="-1.9" font-size="3.2" font-weight="bold" font-family="Liberation Sans, sans-serif" fill="#333">Z</text><text x="-4.8" y="1.7" font-size="3.2" font-weight="bold" font-family="Liberation Sans, sans-serif" fill="#333">Y</text></g>
<g transform="translate(352.4,24) scale(1.2)"><path d="M0,0.6 V-3.2" stroke="#2a2ad8" stroke-width="0.8"/><path d="M0,-4 l-1,1.6 h2z" fill="#2a2ad8"/><path d="M0,0.6 L3,2.4" stroke="#e02828" stroke-width="0.8"/><path d="M0,0.6 L-3,2.6" stroke="#22b022" stroke-width="0.8"/><path d="M-3.4,-0.6 q3.4,1.8 6.8,0" stroke="#333" stroke-width="0.5" fill="none"/><path d="M3.6,2.8 l-1.8,-0.2 l0.8,-1.2z" fill="#e02828"/><path d="M-3.6,3 l1.8,-0.3 l-0.8,-1.1z" fill="#22b022"/></g>
<g transform="translate(364,24) scale(1.2)"><path d="M-3.4,-3 l5.6,0.8 v4.2 l-5.6,1z" fill="#2d4aa8"/><path d="M-2.6,-2 l4,0.6 v2.8 l-4,0.7z" fill="#5d7ad8"/><path d="M3.8,0.8 q-0.6,2.4 -3,2.4 l0.2,-1 l-2,1.6 l2.2,1.2 l0,-0.9 q3,-0.2 2.6,-3.3z" fill="#e02828"/></g>
<g transform="translate(375.6,24) scale(1.2)"><rect x="-3.4" y="-3.6" width="6.8" height="7" fill="#e4e6ea"/><circle cx="0" cy="-1.4" r="1.5" fill="#d3e6d3"/><path d="M-2.6,3.4 q0,-3 2.6,-3 q2.6,0 2.6,3z" fill="#d3e6d3"/></g>
<rect x="382.8" y="23.9" width="2" height="0.6" fill="#c4c4c4"/>
<g transform="translate(397,24) scale(1.2)"><circle cx="-0.2" cy="-0.6" r="2.3" fill="#e9e9f4" stroke="#6a6a8a" stroke-width="0.7"/><path d="M1.4,1.2 l2.2,2.2" stroke="#5c5c96" stroke-width="1.1"/><path d="M-3.6,2 l1.6,1.2 l-1.6,0.6z" fill="#222"/><path d="M1,-3.6 h2.6" stroke="#333" stroke-width="0.5"/></g>
<g transform="translate(408.6,24) scale(1.2)"><circle cx="-0.8" cy="-0.8" r="2.5" fill="none" stroke="#a9a9b8" stroke-width="0.6"/><circle cx="0.2" cy="0" r="2" fill="#ececf4" stroke="#8c8ca0" stroke-width="0.6"/><path d="M1.6,1.6 l2,2" stroke="#7c7ca6" stroke-width="1"/></g>
<g transform="translate(420.3,24) scale(1.1)"><path d="M0,-3 V3 M-3,0.4 H3" stroke="#4c4fa6" stroke-width="0.6"/><path d="M-1.4,-1.6 q1.2,-1.2 2.4,-0.2" stroke="#4c4fa6" stroke-width="0.5" fill="none"/><path d="M0,-3.6 l-0.8,1.2 h1.6z M0,3.6 l-0.8,-1.2 h1.6z M-3.6,0.4 l1.2,-0.8 v1.6z M3.6,0.4 l-1.2,-0.8 v1.6z" fill="#4c4fa6"/></g>
<g transform="translate(432,24) scale(1.2)"><path d="M-2.2,3.6 q-1.6,-1.8 -2,-3.6 q0.8,-0.6 1.6,0.8 v-3.4 q0.6,-0.8 1.2,0 v-0.8 q0.6,-0.8 1.2,0 v0.6 q0.6,-0.8 1.2,0 v0.9 q0.6,-0.6 1.2,0 v3.3 q0,1.4 -0.8,2.2z" fill="#f8f8f8" stroke="#5a5a64" stroke-width="0.5"/></g>
<g transform="translate(443.6,24) scale(1.0)"><path d="M-3.8,0 l2.2,-1.7 v1 h3.2 v-1 l2.2,1.7 l-2.2,1.7 v-1 h-3.2 v1z" fill="#6e72d2"/></g>
<g transform="translate(455.2,24) scale(1.0)"><path d="M0,-3.8 l1.7,2.2 h-1 v3.2 h1 l-1.7,2.2 l-1.7,-2.2 h1 v-3.2 h-1z" fill="#6e72d2"/></g>
<g transform="translate(467.6,24) scale(1.2)"><path d="M-1.4,-3.2 q-2.6,3.2 0,6.4 M1.4,-3.2 q2.6,3.2 0,6.4" stroke="#4c4fa6" stroke-width="1" fill="none"/><path d="M-2.6,-3.6 l2.2,-0.2 l-1,1.8z M2.6,3.6 l-2.2,0.2 l1,-1.8z" fill="#4c4fa6"/></g>
<g transform="translate(484.2,24) scale(1.2)"><path d="M-1.6,-3.8 h5.4 v3 h-5.4z" fill="#5a5db0"/><circle cx="1.6" cy="-2.3" r="1.1" fill="#d4d6f2"/><path d="M-3,-2.8 h1.6 v1.4 h-1.6z" fill="#7a7dc4"/><rect x="-3.4" y="-0.6" width="4.6" height="4.4" fill="#3c3f9c"/><rect x="-2.2" y="1.6" width="2" height="2.2" fill="#f4f4f4"/></g>
<g transform="translate(495.7,24) scale(1.2)"><path d="M-1.6,-3.8 h5.4 v3 h-5.4z" fill="#5a5db0"/><circle cx="1.6" cy="-2.3" r="1.1" fill="#d4d6f2"/><path d="M-3,-2.8 h1.6 v1.4 h-1.6z" fill="#7a7dc4"/><rect x="-3.4" y="-0.6" width="5.2" height="4.4" fill="#fafafa" stroke="#3c3f86" stroke-width="0.6"/></g>
<g transform="translate(507.4,24) scale(1.2)"><path d="M-1.6,-3.8 h5.4 v3 h-5.4z" fill="#5a5db0"/><circle cx="1.6" cy="-2.3" r="1.1" fill="#d4d6f2"/><path d="M-3,-2.8 h1.6 v1.4 h-1.6z" fill="#7a7dc4"/><rect x="-3.4" y="1.8" width="5.2" height="2" fill="#fafafa" stroke="#3c3f86" stroke-width="0.6"/></g>
<g transform="translate(519,24) scale(1.2)"><path d="M-1.6,-3.8 h5.4 v3 h-5.4z" fill="#5a5db0"/><circle cx="1.6" cy="-2.3" r="1.1" fill="#d4d6f2"/><path d="M-3,-2.8 h1.6 v1.4 h-1.6z" fill="#7a7dc4"/><rect x="-3.4" y="-0.6" width="5.2" height="4.4" fill="#fafafa" stroke="#3c3f86" stroke-width="0.6"/></g>
<g transform="translate(530.6,24) scale(1.2)"><path d="M-1.6,-3.8 h5.4 v3 h-5.4z" fill="#5a5db0"/><circle cx="1.6" cy="-2.3" r="1.1" fill="#d4d6f2"/><path d="M-3,-2.8 h1.6 v1.4 h-1.6z" fill="#7a7dc4"/><rect x="-3.4" y="-0.6" width="5.2" height="4.4" fill="#fafafa" stroke="#3c3f86" stroke-width="0.6"/><rect x="-2.4" y="0.4" width="3.2" height="2.6" fill="#5558a8"/></g>
<g transform="translate(542,24) scale(1.2)"><path d="M-1.6,-3.8 h5.4 v3 h-5.4z" fill="#5a5db0"/><circle cx="1.6" cy="-2.3" r="1.1" fill="#d4d6f2"/><path d="M-3,-2.8 h1.6 v1.4 h-1.6z" fill="#7a7dc4"/><rect x="-3.4" y="-0.6" width="5.2" height="4.4" fill="#fafafa" stroke="#3c3f86" stroke-width="0.6"/><path d="M-3.4,0.8 h5.2" stroke="#3c3f86" stroke-width="0.5"/></g>
<g transform="translate(553.3,24) scale(1.2)"><path d="M-1.6,-3.8 h5.4 v3 h-5.4z" fill="#5a5db0"/><circle cx="1.6" cy="-2.3" r="1.1" fill="#d4d6f2"/><path d="M-3,-2.8 h1.6 v1.4 h-1.6z" fill="#7a7dc4"/><rect x="-3.4" y="-0.6" width="5.2" height="4.4" fill="#fafafa" stroke="#3c3f86" stroke-width="0.6"/><path d="M-3.4,0.8 h5.2" stroke="#3c3f86" stroke-width="0.5"/></g>
<g transform="translate(750.2,24) scale(1.2)"><path d="M-4,0 l3.4,-3.2 v1.9 h4 v2.6 h-4 v1.9z" fill="#cfe6f1"/></g>
<g transform="translate(761.2,24) scale(1.2)"><path d="M4,0 l-3.4,-3.2 v1.9 h-4 v2.6 h4 v1.9z" fill="#cfe6f1"/></g>
<g transform="translate(7.7,45.5) scale(1.05)"><path d="M-3.6,-2.4 h2.4 l0.6,-0.7 h4.2 v5.8 h-7.2z" fill="#6f6f6f"/><path d="M-3.2,-1.5 h6.4 v3.8 h-6.4z" fill="#b4b4b4"/><path d="M-3.2,0.4 h6.4 v1.9 h-6.4z" fill="#8f8f8f"/></g>
<g transform="translate(19.6,46.4) scale(1.3)"><path d="M-3.8,-3 q0,-0.9 2.6,-0.9 q2.6,0 2.6,0.9 v4.6 q0,0.9 -2.6,0.9 q-2.6,0 -2.6,-0.9z" fill="#dedede" stroke="#8c8c8c" stroke-width="0.45"/><path d="M-3.8,-3 q0,0.9 2.6,0.9 q2.6,0 2.6,-0.9 M-3.8,-1.3 q0,0.9 2.6,0.9 q2.6,0 2.6,-0.9 M-3.8,0.3 q0,0.9 2.6,0.9 q2.6,0 2.6,-0.9" stroke="#9a9a9a" stroke-width="0.4" fill="none"/><path d="M-0.6,1 L2.6,-1.2 M-0.6,1 L2.8,1.4 M-0.6,1 L2,3.6" stroke="#9aa0b0" stroke-width="0.4"/><circle cx="-0.8" cy="1" r="1.2" fill="#1f6fe0"/><circle cx="2.8" cy="-1.2" r="1" fill="#1f6fe0"/><circle cx="3.2" cy="1.4" r="1" fill="#1f6fe0"/><circle cx="2.2" cy="3.7" r="1" fill="#1f6fe0"/></g>
<g transform="translate(31,46.4) scale(1.3)"><path d="M-3.8,-3 q0,-0.9 2.6,-0.9 q2.6,0 2.6,0.9 v4.6 q0,0.9 -2.6,0.9 q-2.6,0 -2.6,-0.9z" fill="#dedede" stroke="#8c8c8c" stroke-width="0.45"/><path d="M-3.8,-3 q0,0.9 2.6,0.9 q2.6,0 2.6,-0.9 M-3.8,-1.3 q0,0.9 2.6,0.9 q2.6,0 2.6,-0.9 M-3.8,0.3 q0,0.9 2.6,0.9 q2.6,0 2.6,-0.9" stroke="#9a9a9a" stroke-width="0.4" fill="none"/><g transform="translate(0.4,2) scale(1.05)"><path d="M0,-1.6 l3.4,1.4 l-3.4,1.6 l-3.4,-1.6z" fill="#3b4fe8"/><path d="M-3.4,-0.2 l3.4,1.6 l3.4,-1.6 v1.3 l-3.4,1.7 l-3.4,-1.7z" fill="#1420b4"/></g></g>
<g transform="translate(42.6,46.4) scale(1.3)"><path d="M-3.8,-3 q0,-0.9 2.6,-0.9 q2.6,0 2.6,0.9 v4.6 q0,0.9 -2.6,0.9 q-2.6,0 -2.6,-0.9z" fill="#dedede" stroke="#8c8c8c" stroke-width="0.45"/><path d="M-3.8,-3 q0,0.9 2.6,0.9 q2.6,0 2.6,-0.9 M-3.8,-1.3 q0,0.9 2.6,0.9 q2.6,0 2.6,-0.9 M-3.8,0.3 q0,0.9 2.6,0.9 q2.6,0 2.6,-0.9" stroke="#9a9a9a" stroke-width="0.4" fill="none"/><rect x="-1.2" y="-0.6" width="4.4" height="4.8" fill="#f6f6f6" stroke="#999" stroke-width="0.3"/><path d="M-1.2,0.6 q0.4,-1.6 2,-1.4 h2.4 v1.2z" fill="#e23030"/><path d="M0.2,3.6 v-2 h1.6 v2 M-0.4,3.8 h3" stroke="#444" stroke-width="0.5" fill="none"/></g>
<g transform="translate(54.2,46.4) scale(1.3)"><path d="M-3.8,-3 q0,-0.9 2.6,-0.9 q2.6,0 2.6,0.9 v4.6 q0,0.9 -2.6,0.9 q-2.6,0 -2.6,-0.9z" fill="#dedede" stroke="#8c8c8c" stroke-width="0.45"/><path d="M-3.8,-3 q0,0.9 2.6,0.9 q2.6,0 2.6,-0.9 M-3.8,-1.3 q0,0.9 2.6,0.9 q2.6,0 2.6,-0.9 M-3.8,0.3 q0,0.9 2.6,0.9 q2.6,0 2.6,-0.9" stroke="#9a9a9a" stroke-width="0.4" fill="none"/><path d="M0.6,-0.2 l3.2,1.2 l-3.2,1.4 l-3.2,-1.4z" fill="#8f8f8f"/><path d="M-2.6,1 l3.2,1.4 l3.2,-1.4 v1.4 l-3.2,1.6 l-3.2,-1.6z" fill="#3c3c3c"/><path d="M-3.4,-1.6 v2 M-3.4,1.2 v1.6" stroke="#e02828" stroke-width="0.7"/></g>
<g transform="translate(66,46.4) scale(1.3)"><path d="M-3.8,-3 q0,-0.9 2.6,-0.9 q2.6,0 2.6,0.9 v4.6 q0,0.9 -2.6,0.9 q-2.6,0 -2.6,-0.9z" fill="#dedede" stroke="#8c8c8c" stroke-width="0.45"/><path d="M-3.8,-3 q0,0.9 2.6,0.9 q2.6,0 2.6,-0.9 M-3.8,-1.3 q0,0.9 2.6,0.9 q2.6,0 2.6,-0.9 M-3.8,0.3 q0,0.9 2.6,0.9 q2.6,0 2.6,-0.9" stroke="#9a9a9a" stroke-width="0.4" fill="none"/><path d="M-3,2.6 l3.4,-2.6 l3.4,0.8 l-3.2,3z" fill="#8f92d6"/><path d="M-2.4,1.2 l3,-2 l2.6,0.6" stroke="#a7a9e0" stroke-width="0.7" fill="none"/></g>
<g transform="translate(77.6,46.4) scale(1.3)"><path d="M-3.8,-3 q0,-0.9 2.6,-0.9 q2.6,0 2.6,0.9 v4.6 q0,0.9 -2.6,0.9 q-2.6,0 -2.6,-0.9z" fill="#dedede" stroke="#8c8c8c" stroke-width="0.45"/><path d="M-3.8,-3 q0,0.9 2.6,0.9 q2.6,0 2.6,-0.9 M-3.8,-1.3 q0,0.9 2.6,0.9 q2.6,0 2.6,-0.9 M-3.8,0.3 q0,0.9 2.6,0.9 q2.6,0 2.6,-0.9" stroke="#9a9a9a" stroke-width="0.4" fill="none"/><g transform="translate(0,1.2) scale(1.0)"><ellipse cx="-1.6" cy="2.0" rx="2.1" ry="1.5" fill="#1b3bd8"/><ellipse cx="0.6" cy="0.4" rx="1.8" ry="1.4" fill="#25b52a"/><ellipse cx="2.6" cy="2.3" rx="1.6" ry="1.2" fill="#e38a17"/></g></g>
<g transform="translate(89.2,46.4) scale(1.3)"><path d="M-3.8,-3 q0,-0.9 2.6,-0.9 q2.6,0 2.6,0.9 v4.6 q0,0.9 -2.6,0.9 q-2.6,0 -2.6,-0.9z" fill="#dedede" stroke="#8c8c8c" stroke-width="0.45"/><path d="M-3.8,-3 q0,0.9 2.6,0.9 q2.6,0 2.6,-0.9 M-3.8,-1.3 q0,0.9 2.6,0.9 q2.6,0 2.6,-0.9 M-3.8,0.3 q0,0.9 2.6,0.9 q2.6,0 2.6,-0.9" stroke="#9a9a9a" stroke-width="0.4" fill="none"/><path d="M0.8,-1.6 q2.6,0.8 0,1.6 q-2.6,0.8 0,1.6 q2.6,0.8 0,1.6 q-2.2,0.6 0,1.2" stroke="#8a6e64" stroke-width="1.2" fill="none"/></g>
<circle cx="132.2" cy="57.6" r="1.5" fill="none" stroke="#8a8a8a" stroke-width="0.5"/><path d="M133.3,58.7 l1.3,1.3" stroke="#8a8a8a" stroke-width="0.6"/>
<g transform="translate(7.8,69.6) scale(1.15)"><path d="M-3.8,-2.6 l3.2,-1.2 v5.4 l-3.2,1.2z" fill="#5560b4"/><path d="M-1.6,-0.6 l5,-1.6 v5 l-5,1.8z" fill="#4d86de"/><path d="M-1.6,-0.6 l5,-1.6 v5 l-5,1.8z" fill="none" stroke="#2a4fa8" stroke-width="0.3"/></g>
<path d="M14.1,69.6 h2.6 l-1.3,1.45z" fill="#1a1a1a"/>
<g transform="translate(23,69.6) scale(1.15)"><g transform="translate(-0.8,-1.8) scale(0.9)"><path d="M-3.6,0 q3.6,-3.4 7.2,0 q-3.6,2.6 -7.2,0z" fill="#ececec" stroke="#9c9c9c" stroke-width="0.45"/><circle cx="0" cy="-0.2" r="1.3" fill="#6b88e0"/><circle cx="0" cy="-0.2" r="0.45" fill="#33458f"/></g><rect x="1" y="0.4" width="2.2" height="1.8" fill="#5a86e0" stroke="#aab" stroke-width="0.3"/><rect x="1" y="2.6" width="2.2" height="1.8" fill="#5a86e0" stroke="#aab" stroke-width="0.3"/><path d="M0,0 v3.6 h1" stroke="#999" stroke-width="0.4" fill="none"/></g>
<g transform="translate(34.6,69.6) scale(1.15)"><g transform="translate(-0.8,-1.8) scale(0.9)"><path d="M-3.6,0 q3.6,-3.4 7.2,0 q-3.6,2.6 -7.2,0z" fill="#ececec" stroke="#9c9c9c" stroke-width="0.45"/><circle cx="0" cy="-0.2" r="1.3" fill="#6b88e0"/><circle cx="0" cy="-0.2" r="0.45" fill="#33458f"/></g><rect x="1" y="0.2" width="2.4" height="1.9" fill="#f0f0f0" stroke="#9a9a9a" stroke-width="0.4"/><rect x="1" y="2.6" width="2.4" height="1.9" fill="#f0f0f0" stroke="#9a9a9a" stroke-width="0.4"/><path d="M0,0 v3.6 h1" stroke="#999" stroke-width="0.4" fill="none"/></g>
<g transform="translate(46.2,69.6) scale(1.15)"><g transform="translate(-0.8,-1.8) scale(0.9)"><path d="M-3.6,0 q3.6,-3.4 7.2,0 q-3.6,2.6 -7.2,0z" fill="#ececec" stroke="#9c9c9c" stroke-width="0.45"/><circle cx="0" cy="-0.2" r="1.3" fill="#6b88e0"/><circle cx="0" cy="-0.2" r="0.45" fill="#33458f"/></g><rect x="-0.6" y="0.6" width="2.2" height="2" fill="#6a8ae0" stroke="#99a" stroke-width="0.3"/><path d="M1.2,1.6 h2.2 l0.8,1 v2 h-3z" fill="#f2f2f2" stroke="#8a8a8a" stroke-width="0.4"/></g>
<g transform="translate(65.2,70.0) scale(1.15)"><g transform="scale(1.05)"><path d="M0,-1.6 l3.4,1.4 l-3.4,1.6 l-3.4,-1.6z" fill="#3b4fe8"/><path d="M-3.4,-0.2 l3.4,1.6 l3.4,-1.6 v1.3 l-3.4,1.7 l-3.4,-1.7z" fill="#1420b4"/></g></g>
<path d="M70.9,69.6 h2.6 l-1.3,1.45z" fill="#1a1a1a"/>
<g transform="translate(79.2,69.6) scale(1.15)"><path d="M-3.8,-2.6 l3.2,-1.2 v5.4 l-3.2,1.2z" fill="#5560b4"/><path d="M-1.6,-0.6 l5,-1.6 v5 l-5,1.8z" fill="#4d86de"/><path d="M-1.6,-0.6 l5,-1.6 v5 l-5,1.8z" fill="none" stroke="#2a4fa8" stroke-width="0.3"/></g>
<path d="M85.7,69.6 h2.6 l-1.3,1.45z" fill="#1a1a1a"/>
<g transform="translate(95,69.6) scale(1.05)"><path d="M-1.6,-3.6 v6 l1.4,-1.2 l1.2,2.6 l1,-0.5 l-1.2,-2.5 h1.8z" fill="#fdfdfd" stroke="#444" stroke-width="0.45"/></g>
<g transform="translate(107,69.6) scale(1.15)"><rect x="-3.4" y="0.2" width="6.6" height="3.4" fill="#ecea20" stroke="#35d8e0" stroke-width="0.7"/><path d="M0.6,-3.4 q1.8,0.6 1.4,3.2" stroke="#222" stroke-width="0.9" fill="none"/></g>
<g transform="translate(118.4,69.6) scale(1.15)"><g transform="translate(0,-1.2)"><path d="M-3.6,0 q3.6,-3.4 7.2,0 q-3.6,2.6 -7.2,0z" fill="#ececec" stroke="#9c9c9c" stroke-width="0.45"/><circle cx="0" cy="-0.2" r="1.3" fill="#6b88e0"/><circle cx="0" cy="-0.2" r="0.45" fill="#33458f"/></g><path d="M-2,3.4 h1.2 M-0.2,3.4 h0.6 M1,3.4 h1.2" stroke="#333" stroke-width="0.6"/></g>
<g transform="translate(130,69.6) scale(1.15)"><g transform="translate(0,-1.2)"><path d="M-3.6,0 q3.6,-3.4 7.2,0 q-3.6,2.6 -7.2,0z" fill="#ececec" stroke="#9c9c9c" stroke-width="0.45"/><circle cx="0" cy="-0.2" r="1.3" fill="#6b88e0"/><circle cx="0" cy="-0.2" r="0.45" fill="#33458f"/></g><path d="M1.6,2.4 v1.8" stroke="#333" stroke-width="0.6"/></g>
<defs><linearGradient id="cw" x1="0" y1="0" x2="1" y2="1"><stop offset="0" stop-color="#e02828"/><stop offset="0.35" stop-color="#e8d820"/><stop offset="0.6" stop-color="#28c040"/><stop offset="0.85" stop-color="#2848e0"/><stop offset="1" stop-color="#c030c0"/></linearGradient></defs>
<circle cx="66.2" cy="81.6" r="2.7" fill="url(#cw)"/><path d="M66.2,81.6 l-2.7,0 a2.7,2.7 0 0 1 1.4,-2.4z" fill="#e83030"/><path d="M66.2,81.6 l1.4,-2.4 a2.7,2.7 0 0 1 1.3,2.4z" fill="#30c8e0"/><path d="M66.2,81.6 l2.7,0 a2.7,2.7 0 0 1 -1.4,2.4z" fill="#3040e0"/><path d="M66.2,81.6 l-1.4,2.4 a2.7,2.7 0 0 1 -1.3,-2.4z" fill="#e030c0"/><path d="M66.2,81.6 l-1.3,-2.4 a2.7,2.7 0 0 1 2.7,0z" fill="#40d040"/>
<path d="M4.4,90.2 h1.6 M5.2,89.4 v1.6" stroke="#8a8a8a" stroke-width="0.5"/><path d="M6.4,90.2 h3" stroke="#c4c4c4" stroke-width="0.4"/>
<g transform="translate(13.2,89.9) scale(0.86)"><path d="M-3.6,-2.6 h2.6 l0.8,0.9 h3.6 v4.6 h-7z" fill="#e9a93a"/><path d="M-3.6,2.9 l1,-3.8 h6.6 l-1,3.8z" fill="#f3c14e"/></g>
<path d="M4.4,97.7 h1.6 M5.2,96.9 v1.6" stroke="#8a8a8a" stroke-width="0.5"/><path d="M6.4,97.7 h3" stroke="#c4c4c4" stroke-width="0.4"/>
<g transform="translate(13.2,97.4) scale(0.86)"><path d="M-3.6,-2.6 h2.6 l0.8,0.9 h3.6 v4.6 h-7z" fill="#e9a93a"/><path d="M-3.6,2.9 l1,-3.8 h6.6 l-1,3.8z" fill="#f3c14e"/></g>
<path d="M4.4,105.2 h1.6 M5.2,104.4 v1.6" stroke="#8a8a8a" stroke-width="0.5"/><path d="M6.4,105.2 h3" stroke="#c4c4c4" stroke-width="0.4"/>
<g transform="translate(13.2,104.9) scale(0.86)"><path d="M-3.6,-2.6 h2.6 l0.8,0.9 h3.6 v4.6 h-7z" fill="#e9a93a"/><path d="M-3.6,2.9 l1,-3.8 h6.6 l-1,3.8z" fill="#f3c14e"/></g>
<path d="M4.4,112.7 h1.6 M5.2,111.9 v1.6" stroke="#8a8a8a" stroke-width="0.5"/><path d="M6.4,112.7 h3" stroke="#c4c4c4" stroke-width="0.4"/>
<g transform="translate(13.2,112.4) scale(0.86)"><path d="M-3.6,-2.6 h2.6 l0.8,0.9 h3.6 v4.6 h-7z" fill="#e9a93a"/><path d="M-3.6,2.9 l1,-3.8 h6.6 l-1,3.8z" fill="#f3c14e"/></g>
<path d="M4.4,120.2 h1.6 M5.2,119.4 v1.6" stroke="#8a8a8a" stroke-width="0.5"/><path d="M6.4,120.2 h3" stroke="#c4c4c4" stroke-width="0.4"/>
<g transform="translate(13.2,119.9) scale(0.86)"><path d="M-3.6,-2.6 h2.6 l0.8,0.9 h3.6 v4.6 h-7z" fill="#e9a93a"/><path d="M-3.6,2.9 l1,-3.8 h6.6 l-1,3.8z" fill="#f3c14e"/></g>
<path d="M5.2,91 V119" stroke="#d0d0d0" stroke-width="0.4"/>
<g transform="translate(14.2,91.10000000000001) scale(1.0)"><g transform="scale(0.72)"><path d="M0,-1.6 l3.4,1.4 l-3.4,1.6 l-3.4,-1.6z" fill="#3b4fe8"/><path d="M-3.4,-0.2 l3.4,1.6 l3.4,-1.6 v1.3 l-3.4,1.7 l-3.4,-1.7z" fill="#1420b4"/></g></g>
<g transform="translate(14.4,98.5) scale(1.0)"><rect x="-1.6" y="-1.6" width="3.4" height="3.6" fill="#f4f4f4" stroke="#888" stroke-width="0.3"/><path d="M-1.6,-0.6 q0.4,-1.2 1.6,-1 h1.8 v1z" fill="#e23030"/><path d="M-0.4,1.6 v-1.4 h1.2 v1.4" stroke="#444" stroke-width="0.4" fill="none"/></g>
<g transform="translate(14.4,106.10000000000001) scale(1.0)"><path d="M0,-1.4 l2.6,1 l-2.6,1.1 l-2.6,-1.1z" fill="#8f8f8f"/><path d="M-2.6,-0.4 l2.6,1.1 l2.6,-1.1 v1 l-2.6,1.3 l-2.6,-1.3z" fill="#3c3c3c"/><path d="M-3.2,-1.6 v1.6" stroke="#e02828" stroke-width="0.6"/></g>
<g transform="translate(14.4,113.60000000000001) scale(1.0)"><rect x="-1.6" y="-1.4" width="3.4" height="3" fill="#ddd" stroke="#444" stroke-width="0.5"/><path d="M-0.6,-1.4 v3 M0.8,-1.4 v3" stroke="#444" stroke-width="0.4"/></g>
<g transform="translate(14.4,121.10000000000001) scale(1.0)"><rect x="-1.8" y="-1.4" width="3.8" height="2.8" fill="#5a9ae8" stroke="#3a5a9a" stroke-width="0.4"/><path d="M-0.8,2.2 h1.8 M0.1,1.4 v0.8" stroke="#444" stroke-width="0.5"/></g>
<path d="M132.6,293.2 l1,1.6 l1,-1.6" stroke="#444" stroke-width="0.5" fill="none"/>
<rect x="142.4" y="41.0" width="0.8" height="0.8" fill="#666"/><rect x="144.9" y="41.0" width="0.8" height="0.8" fill="#666"/><rect x="147.4" y="41.0" width="0.8" height="0.8" fill="#666"/><rect x="149.9" y="41.0" width="0.8" height="0.8" fill="#666"/>
<g transform="translate(146.2,50.4) scale(1.1)"><path d="M-3.6,-1.8 l7.4,-2.4 v6 l-7.4,2.2z" fill="#3b3f8c"/><path d="M-3.6,-1.8 l7.4,-2.4 v1.4 l-7.4,2.4z" fill="#5c60b0"/><path d="M-0.6,-2.8 v6.2 M1.8,-3.6 v6.2" stroke="#5a5ea8" stroke-width="0.4"/><rect x="-4" y="-0.8" width="5.6" height="4.8" fill="#f7e9e6" stroke="#e2604c" stroke-width="0.8"/><path d="M-1.2,-0.8 v4.8 M-4,1.6 h5.6" stroke="#e8a090" stroke-width="0.4"/></g>
<g transform="translate(146.2,61) scale(1.1)"><path d="M-3.6,-1.8 l7.4,-2.4 v6 l-7.4,2.2z" fill="#3b3f8c"/><path d="M-3.6,-1.8 l7.4,-2.4 v1.4 l-7.4,2.4z" fill="#5c60b0"/><path d="M-0.6,-2.8 v6.2 M1.8,-3.6 v6.2" stroke="#5a5ea8" stroke-width="0.4"/><path d="M4.6,0.4 l-3.6,0.4 l1,0.9 l-1.6,1.3 l1.6,1 l1.2,-1.5 l1,0.9z" fill="#e22828"/></g>
<g transform="translate(146.2,72) scale(1.1)"><path d="M-3.6,-1.8 l7.4,-2.4 v6 l-7.4,2.2z" fill="#3b3f8c"/><path d="M-3.6,-1.8 l7.4,-2.4 v1.4 l-7.4,2.4z" fill="#5c60b0"/><path d="M-0.6,-2.8 v6.2 M1.8,-3.6 v6.2" stroke="#5a5ea8" stroke-width="0.4"/><path d="M1,-1 l3,-1 v3.6 l-3,1z" fill="#d9d9e4"/></g>
<g transform="translate(146.2,83.2) scale(1.1)"><path d="M-3.6,-1.8 l7.4,-2.4 v6 l-7.4,2.2z" fill="#3b3f8c"/><path d="M-3.6,-1.8 l7.4,-2.4 v1.4 l-7.4,2.4z" fill="#5c60b0"/><path d="M-0.6,-2.8 v6.2 M1.8,-3.6 v6.2" stroke="#5a5ea8" stroke-width="0.4"/></g>
<g transform="translate(146.2,95.6) scale(1.1)"><path d="M-3.6,-1.8 l7.4,-2.4 v6 l-7.4,2.2z" fill="#3b3f8c"/><path d="M-3.6,-1.8 l7.4,-2.4 v1.4 l-7.4,2.4z" fill="#5c60b0"/><path d="M-0.6,-2.8 v6.2 M1.8,-3.6 v6.2" stroke="#5a5ea8" stroke-width="0.4"/><rect x="-4" y="-1.4" width="5.4" height="5.6" fill="none" stroke="#e2604c" stroke-width="0.8"/></g>
<g transform="translate(146.2,107.2) scale(1.1)"><circle cx="0" cy="0" r="4.3" fill="#fbeeee" stroke="#e2503c" stroke-width="0.8"/><path d="M-2,-1.6 l4.2,-1.2 v4.4 l-4.2,1.4z" fill="#3b3f8c"/></g>
<g transform="translate(146.2,118.4) scale(1.1)"><path d="M-3.8,1.6 l2,-3.6 l2.2,1 l-1.6,3.8z M0.4,2.6 l1.2,-4 l2.4,0.6 l-0.6,4z" fill="#1f2470"/><circle cx="-2.4" cy="2" r="1.5" fill="#3a40a0"/><circle cx="2" cy="2.6" r="1.5" fill="#3a40a0"/><path d="M-2.4,-2 l4,0.8" stroke="#9aa0e0" stroke-width="0.8"/></g>
<g transform="translate(146.2,128.4) scale(1.1)"><circle cx="-0.8" cy="0" r="1.5" fill="#1c22c8"/><text x="-2.8" y="6.6" font-size="3.2" font-family="Liberation Sans, sans-serif" fill="#222" font-weight="bold">123</text></g>
<g transform="translate(146.2,142) scale(1.1)"><path d="M-3.8,-1.6 L3.6,2.6 M-3.8,3.4 L3.8,-3.8 M-3.8,-1.6 V3.6 M3.8,-3.8 V3" stroke="#2e3270" stroke-width="0.6" fill="none"/><path d="M-1.6,2.4 q2,1.2 3.6,-0.6" stroke="#2e3270" stroke-width="0.5" fill="none"/></g>
<rect x="141" y="149.2" width="10.6" height="10.400000000000006" fill="#f3c98f" stroke="#dba055" stroke-width="0.5"/>
<g transform="translate(146.2,154.4) scale(1.1)"><path d="M-4,-3.6 l3.4,-0.8 v3.6 l-3.4,0.8z" fill="#5a5fb4"/><text x="-3.6" y="3.6" font-size="3.4" font-family="Liberation Sans, sans-serif" fill="#8a3a10" font-weight="bold">ABC</text></g>
<rect x="141" y="161" width="10.6" height="10.199999999999989" fill="#f3c98f" stroke="#dba055" stroke-width="0.5"/>
<g transform="translate(146.2,166.2) scale(1.1)"><path d="M-3.4,-4 v4" stroke="#e02828" stroke-width="1"/><circle cx="-3.4" cy="0.6" r="0.8" fill="#222"/><text x="-3.6" y="3.8" font-size="3.4" font-family="Liberation Sans, sans-serif" fill="#8a3a10" font-weight="bold">ABC</text></g>
<g transform="translate(146.2,177.2) scale(1.1)"><path d="M-3.8,-3.8 l1.2,3 h-2.2z" fill="#e02828"/><path d="M-2.6,-0.4 q3,-2.4 6,-3" stroke="#4a4fb0" stroke-width="0.6" fill="none"/><rect x="-0.8" y="-0.6" width="4.6" height="4.6" fill="#6a70c8"/><path d="M-3.8,1 h2.6 v2.6 h-2.6z" fill="#8a8fd8"/><path d="M2.6,0.4 v3.2" stroke="#e02828" stroke-width="0.8"/></g>
<rect x="141" y="183.2" width="10.6" height="10.400000000000006" fill="#f3c98f" stroke="#dba055" stroke-width="0.5"/>
<g transform="translate(146.2,188.4) scale(1.1)"><path d="M-4,-2.2 l8,-1.6 v6 l-8,1.6z" fill="#4a7ad8" stroke="#2a3a80" stroke-width="0.6"/><path d="M-4,-2.2 l8,-1.6" stroke="#1a2050" stroke-width="0.8"/></g>
<rect x="141.79999999999998" y="339.40" width="0.8" height="0.8" fill="#666"/>
<rect x="141.79999999999998" y="341.07" width="0.8" height="0.8" fill="#666"/>
<rect x="141.79999999999998" y="342.74" width="0.8" height="0.8" fill="#666"/>
<rect x="141.79999999999998" y="344.41" width="0.8" height="0.8" fill="#666"/>
<rect x="141.79999999999998" y="346.08" width="0.8" height="0.8" fill="#666"/>
<g transform="translate(150,343.5) scale(1.15)"><g transform="translate(-0.6,-0.8) scale(1.08)"><path d="M-3.6,-2.6 h2.6 l0.8,0.9 h3.6 v4.6 h-7z" fill="#f2c66c"/><path d="M-3.6,2.9 l1,-3.8 h6.6 l-1,3.8z" fill="#f8dc92"/></g><g transform="translate(0.2,1.6) scale(1.0)"><ellipse cx="-1.6" cy="2.0" rx="2.1" ry="1.5" fill="#1b3bd8"/><ellipse cx="0.6" cy="0.4" rx="1.8" ry="1.4" fill="#25b52a"/><ellipse cx="2.6" cy="2.3" rx="1.6" ry="1.2" fill="#e38a17"/></g></g>
<g transform="translate(161.9,343.5) scale(1.15)"><g transform="translate(-0.6,-0.8) scale(1.08)"><path d="M-3.6,-2.6 h2.6 l0.8,0.9 h3.6 v4.6 h-7z" fill="#f2c66c"/><path d="M-3.6,2.9 l1,-3.8 h6.6 l-1,3.8z" fill="#f8dc92"/></g><g transform="translate(0.6,2) scale(1.0)"><path d="M0,-1.6 l3.4,1.4 l-3.4,1.6 l-3.4,-1.6z" fill="#3b4fe8"/><path d="M-3.4,-0.2 l3.4,1.6 l3.4,-1.6 v1.3 l-3.4,1.7 l-3.4,-1.7z" fill="#1420b4"/></g></g>
<g transform="translate(173.5,343.5) scale(1.15)"><g transform="translate(-0.6,-0.8) scale(1.08)"><path d="M-3.6,-2.6 h2.6 l0.8,0.9 h3.6 v4.6 h-7z" fill="#f2c66c"/><path d="M-3.6,2.9 l1,-3.8 h6.6 l-1,3.8z" fill="#f8dc92"/></g><rect x="-0.6" y="-0.8" width="4.4" height="5" fill="#f6f6f6" stroke="#999" stroke-width="0.3"/><path d="M-0.6,0.4 q0.4,-1.6 2,-1.4 h2.4 v1.2z" fill="#e23030"/><path d="M0.8,3.6 v-2 h1.6 v2 M0.2,3.8 h3" stroke="#444" stroke-width="0.5" fill="none"/></g>
<g transform="translate(185.2,343.5) scale(1.15)"><g transform="translate(-0.6,-0.8) scale(1.08)"><path d="M-3.6,-2.6 h2.6 l0.8,0.9 h3.6 v4.6 h-7z" fill="#f2c66c"/><path d="M-3.6,2.9 l1,-3.8 h6.6 l-1,3.8z" fill="#f8dc92"/></g><path d="M0.8,-0.2 l3.4,1.3 l-3.4,1.5 l-3.4,-1.5z" fill="#9a9a9a"/><path d="M-2.6,1.1 l3.4,1.5 l3.4,-1.5 v1.4 l-3.4,1.7 l-3.4,-1.7z" fill="#4a4a4a"/><path d="M-3.4,-1.4 v2 M-3.4,1.4 v1.4" stroke="#e02828" stroke-width="0.7"/></g>
<g transform="translate(196.9,343.5) scale(1.15)"><g transform="translate(-0.6,-0.8) scale(1.08)"><path d="M-3.6,-2.6 h2.6 l0.8,0.9 h3.6 v4.6 h-7z" fill="#f2c66c"/><path d="M-3.6,2.9 l1,-3.8 h6.6 l-1,3.8z" fill="#f8dc92"/></g><path d="M-0.2,-3.8 v5" stroke="#e02020" stroke-width="1.1"/><path d="M-0.2,3 l-1.6,-2.2 h3.2z" fill="#e02020"/><rect x="-1.4" y="3" width="2" height="1.4" fill="#222"/><rect x="1.2" y="1.6" width="3" height="3" fill="#3aa83a"/></g>
<g transform="translate(208.5,343.5) scale(1.15)"><g transform="translate(-0.6,-0.8) scale(1.08)"><path d="M-3.6,-2.6 h2.6 l0.8,0.9 h3.6 v4.6 h-7z" fill="#f2c66c"/><path d="M-3.6,2.9 l1,-3.8 h6.6 l-1,3.8z" fill="#f8dc92"/></g><path d="M-0.6,-1.4 v3.4 l-2.4,1.6 M-0.6,2 l2,0.8" stroke="#5a6ab8" stroke-width="0.7" fill="none"/><rect x="1.2" y="1.6" width="3" height="3" fill="#3aa83a"/></g>
<path d="M214.89999999999998,343.29999999999995 h2.6 l-1.3,1.45z" fill="#1a1a1a"/>
<rect x="220.2" y="339.4" width="0.5" height="8.6" fill="#b9b9b9"/>
<g transform="translate(228.8,343.5) scale(1.15)"><path d="M-2.3,-2.3 l4.6,4.6 M2.3,-2.3 l-4.6,4.6" stroke="#e0262a" stroke-width="2.0" stroke-linecap="round"/></g>
<g transform="translate(240.6,343.5) scale(1.15)"><path d="M-4,0.4 q0.4,-3.4 3.6,-3.6 l2.6,0.2 q2.2,1 1.8,3.6 q-0.4,2.6 -2.4,2.8 l-3.2,-0.2 q-2.6,-0.4 -2.4,-2.8z" fill="#9a9a9a" stroke="#666" stroke-width="0.5"/><path d="M-0.4,-3.2 q-2,1.6 -1.2,6.2 M1.8,-3 q-1.8,2 -1,6.2" stroke="#6a6a6a" stroke-width="0.5" fill="none"/></g>
<g transform="translate(251.9,343.5) scale(1.15)"><g transform="translate(-0.6,-0.8) scale(1.08)"><path d="M-3.6,-2.6 h2.6 l0.8,0.9 h3.6 v4.6 h-7z" fill="#f2c66c"/><path d="M-3.6,2.9 l1,-3.8 h6.6 l-1,3.8z" fill="#f8dc92"/></g><path d="M3.8,1.4 h-3.4 v-1.4 l-2.8,2.2 l2.8,2.2 v-1.4 h3.4z" fill="#e63a2a"/></g>
<g transform="translate(264,343.5) scale(1.15)"><path d="M0,4 V-1 M0,-0.2 L-2,-2.6 M0,-0.2 L2,-2.6 M0,-1 V-4" stroke="#555" stroke-width="0.6" fill="none"/><path d="M-2.6,-3.6 l1.2,1.8 M2.6,-3.6 l-1.2,1.8" stroke="#e02828" stroke-width="1"/><path d="M2.6,0 l0.6,1.4" stroke="#e02828" stroke-width="0.8"/></g>
<rect x="272.1" y="339.40" width="0.8" height="0.8" fill="#666"/>
<rect x="272.1" y="341.07" width="0.8" height="0.8" fill="#666"/>
<rect x="272.1" y="342.74" width="0.8" height="0.8" fill="#666"/>
<rect x="272.1" y="344.41" width="0.8" height="0.8" fill="#666"/>
<rect x="272.1" y="346.08" width="0.8" height="0.8" fill="#666"/>
<g transform="translate(278.6,343.5) scale(1.15)"><path d="M-3.4,-0.2 q1.2,-3.4 4.6,-3 q2.2,0.4 2.6,2.2 l-2.2,1.6 q-0.8,-1.8 -2.8,-1.6z" fill="#5a5eb0"/><path d="M-3.4,-0.2 l2.2,-0.8 l2.2,2.4 l-2.8,0.4z" fill="#8a8ed8"/><rect x="-3.4" y="2.6" width="1.4" height="1.2" fill="#e02828"/><rect x="-2" y="2.6" width="1.4" height="1.2" fill="#e8d820"/><rect x="-0.6" y="2.6" width="1.4" height="1.2" fill="#28b030"/><rect x="0.8" y="2.6" width="1.4" height="1.2" fill="#28c8e0"/><rect x="2.2" y="2.6" width="1.4" height="1.2" fill="#2838e0"/></g>
<rect x="282.6" y="339.2" width="26.6" height="8.8" fill="#ffffff"/>
<text x="283.8" y="345.4" font-size="5" font-family="Liberation Sans, sans-serif" fill="#333" textLength="16.8" lengthAdjust="spacingAndGlyphs">By Topo</text>
<path d="M311.3,343.29999999999995 h2.6 l-1.3,1.45z" fill="#1a1a1a"/>
<g transform="translate(321.6,343.5) scale(1.15)"><path d="M-3.6,-0.6 q0.4,-2.6 3.6,-2.6 q3.2,0.2 3.4,2 q-0.2,1.8 -2.6,2.2 l-1.4,1.6 l-0.2,-1.4 q-2.8,-0.2 -2.8,-1.8z" fill="#fafafa" stroke="#5a5a6a" stroke-width="0.5"/><path d="M2.2,0.6 l1.8,2" stroke="#5a5a6a" stroke-width="0.6"/></g>
<path d="M328.5,343.29999999999995 h2.6 l-1.3,1.45z" fill="#1a1a1a"/>
<g transform="translate(338,343.5) scale(1.15)"><path d="M-4,-0.4 q2,-3.6 5.4,-3 q2.4,0.6 2.8,2.8 l-2.2,2.4 q-0.4,-2.4 -2.4,-3 q-1.6,-0.2 -2.6,1.2z" fill="#5a5eb0"/><path d="M-4,-0.4 l1,0.4 q1,-1.4 2.6,-1.2 q2,0.6 2.4,3 l0.2,0.2" fill="none" stroke="#8a8ed8" stroke-width="0.7"/></g>
<path d="M344.4,343.29999999999995 h2.6 l-1.3,1.45z" fill="#1a1a1a"/>
<g transform="translate(353.4,343.5) scale(1.15)"><path d="M0,-0.4 l3.6,-1.4 v4.2 l-3.6,1.8z" fill="#6a6eb8"/><path d="M0,-0.4 l-3.6,-1.4 v4.2 l3.6,1.8z" fill="#a4a8e0"/><path d="M0,-0.4 l3.6,-1.4 l-3.6,-1.6 l-3.6,1.6z" fill="#c8caf0"/><path d="M0,-0.4 l3.6,-1.4 l-3.6,-1.6 l-3.6,1.6z M-3.6,-1.8 v4.2 l3.6,1.8 l3.6,-1.8 v-4.2 M0,-0.4 v4.6" fill="none" stroke="#3c3f86" stroke-width="0.4"/></g>
<rect x="361.2" y="339.4" width="0.5" height="8.6" fill="#b9b9b9"/>
<g transform="translate(367.6,343.5) scale(1.15)"><path d="M0,-1 l3.2,-1.2 v2.6 l-3.2,1.6z" fill="#3c3f8c"/><path d="M0,-1 l-3.2,-1.2 v2.6 l3.2,1.6z" fill="#5c60b0"/><path d="M0,-1 l3.2,-1.2 l-3.2,-1.4 l-3.2,1.4z" fill="#7a7ed0"/><rect x="-3.4" y="2.8" width="1.4" height="1.2" fill="#e02828"/><rect x="-2" y="2.8" width="1.4" height="1.2" fill="#e8d820"/><rect x="-0.6" y="2.8" width="1.4" height="1.2" fill="#28b030"/><rect x="0.8" y="2.8" width="1.4" height="1.2" fill="#28c8e0"/><rect x="2.2" y="2.8" width="1.4" height="1.2" fill="#c030c0"/></g>
<rect x="371.8" y="339.2" width="29" height="8.8" fill="#ffffff"/>
<text x="372.8" y="345.4" font-size="5" font-family="Liberation Sans, sans-serif" fill="#333" textLength="17.4" lengthAdjust="spacingAndGlyphs">By Comp</text>
<path d="M402.5,343.29999999999995 h2.6 l-1.3,1.45z" fill="#1a1a1a"/>
<g transform="translate(413,343.5) scale(1.15)"><path d="M0,-3.6 l3.8,1.8 v4.4 l-3.8,1.8 l-3.8,-1.8 v-4.4z" fill="#f4f4f4"/><path d="M0,-0.4 l3.8,-1.4 l-3.8,-1.8 l-3.8,1.8z M-3.8,-1.8 v4.4 l3.8,1.8 l3.8,-1.8 v-4.4 M0,-0.4 v4.8 M-3.8,0.4 l3.8,1.8 l3.8,-1.8 M-1.9,-1.1 v4.6 M1.9,-1.1 v4.6 M-1.9,-2.7 l3.8,1.6 M1.9,-2.7 l-3.8,1.6" fill="none" stroke="#555" stroke-width="0.4"/></g>
<path d="M419.5,343.29999999999995 h2.6 l-1.3,1.45z" fill="#1a1a1a"/>
<g transform="translate(428.8,343.5) scale(1.15)"><path d="M0,-0.4 l3.8,-1.4 v4.4 l-3.8,1.8z" fill="#3c3f8c"/><path d="M0,-0.4 l-3.8,-1.4 v4.4 l3.8,1.8z" fill="#5458a8"/><path d="M0,-0.4 l3.8,-1.4 l-3.8,-1.8 l-3.8,1.8z" fill="#7a7ed0"/><path d="M-3.8,0.4 l3.8,1.8 l3.8,-1.8 M-1.9,-1.1 v4.6 M1.9,-1.1 v4.6" fill="none" stroke="#2a2c60" stroke-width="0.3"/></g>
<path d="M435.5,343.29999999999995 h2.6 l-1.3,1.45z" fill="#1a1a1a"/>
<g transform="translate(445,343.5) scale(1.15)"><path d="M-3,2 l6,-3.6" stroke="#333" stroke-width="0.7"/></g>
<path d="M451.2,343.29999999999995 h2.6 l-1.3,1.45z" fill="#1a1a1a"/>
<g transform="translate(460,343.5) scale(1.15)"><path d="M0,-2.4 l4,1.6 l-4,1.6 l-4,-1.6z" fill="#555"/><path d="M-4,0.6 l4,1.6 l4,-1.6" stroke="#555" stroke-width="0.7" fill="none"/></g>
<path d="M466.7,343.29999999999995 h2.6 l-1.3,1.45z" fill="#1a1a1a"/>
<g transform="translate(476.2,343.5) scale(1.15)"><g transform="scale(1.1)"><path d="M0,-1.6 l3.4,1.4 l-3.4,1.6 l-3.4,-1.6z" fill="#3b4fe8"/><path d="M-3.4,-0.2 l3.4,1.6 l3.4,-1.6 v1.3 l-3.4,1.7 l-3.4,-1.7z" fill="#1420b4"/></g></g>
<path d="M482.9,343.29999999999995 h2.6 l-1.3,1.45z" fill="#1a1a1a"/>
<g transform="translate(492.2,343.5) scale(1.15)"><rect x="-3" y="0.4" width="2.4" height="2.4" fill="#3c3f9c"/><rect x="0.4" y="-3" width="2.4" height="2.4" fill="#3c3f9c"/><rect x="0.8" y="1.2" width="2" height="2" fill="#3c3f9c"/><path d="M-1.8,1.6 L1.6,-1.8 M-1.8,1.6 L1.8,2.2" stroke="#6a6eb8" stroke-width="0.5"/></g>
<g transform="translate(504.2,343.5) scale(1.15)"><rect x="-3.8" y="-3.6" width="7.6" height="5.4" fill="#2a6ad0" stroke="#2a2c60" stroke-width="0.6"/><path d="M-3.2,-3 h6.4 v1.6 h-6.4z" fill="#5a9af0"/><path d="M0,1.8 v1.6 M-2,3.8 h4" stroke="#2a2c60" stroke-width="0.8"/></g>
<rect x="512.8000000000001" y="339.40" width="0.8" height="0.8" fill="#666"/>
<rect x="512.8000000000001" y="341.07" width="0.8" height="0.8" fill="#666"/>
<rect x="512.8000000000001" y="342.74" width="0.8" height="0.8" fill="#666"/>
<rect x="512.8000000000001" y="344.41" width="0.8" height="0.8" fill="#666"/>
<rect x="512.8000000000001" y="346.08" width="0.8" height="0.8" fill="#666"/>
<g transform="translate(521.2,343.5) scale(1.15)"><path d="M0,-4 l1.2,2.6 l2.8,0.3 l-2.1,1.9 l0.6,2.8 l-2.5,-1.4 l-2.5,1.4 l0.6,-2.8 l-2.1,-1.9 l2.8,-0.3z" fill="#f4c020" stroke="#c89010" stroke-width="0.4"/></g>
<rect x="529.6" y="339.40" width="0.8" height="0.8" fill="#666"/>
<rect x="529.6" y="341.07" width="0.8" height="0.8" fill="#666"/>
<rect x="529.6" y="342.74" width="0.8" height="0.8" fill="#666"/>
<rect x="529.6" y="344.41" width="0.8" height="0.8" fill="#666"/>
<rect x="529.6" y="346.08" width="0.8" height="0.8" fill="#666"/>
<g transform="translate(538,343.5) scale(1.15)"><path d="M-3.6,-2.6 l7.2,-1 v6.4 l-7.2,1z" fill="#3c3f8c"/><path d="M-1.2,-3 v6.6 M1.2,-3.3 v6.6 M-3.6,-0.4 l7.2,-1 M-3.6,1.8 l7.2,-1" stroke="#b4b6e4" stroke-width="0.4"/></g>
<path d="M544.5,343.29999999999995 h2.6 l-1.3,1.45z" fill="#1a1a1a"/>
<g transform="translate(553.8,343.5) scale(1.15)"><path d="M-3.4,3.4 l4.6,-4.8" stroke="#9a9ab0" stroke-width="1.6" stroke-linecap="round"/><path d="M1,-3.6 q-1.6,1.6 0.2,3 q1.6,1.4 3,-0.2 l-1.4,-0.2 l-0.6,-1.4 l0.8,-1z" fill="#b4b4c4" stroke="#7a7a90" stroke-width="0.4"/></g>
<rect x="561.2" y="339.4" width="0.5" height="8.6" fill="#b9b9b9"/>
<g transform="translate(569.4,343.5) scale(1.15)"><path d="M-3.8,0 l3.8,-3.6 v2 h3.2 v3.2 h-3.2 v2z" fill="#6a6eb8" stroke="#3c3f86" stroke-width="0.4"/></g>
<g transform="translate(581.2,343.5) scale(1.15)"><path d="M3.8,0 l-3.8,-3.6 v2 h-3.2 v3.2 h3.2 v2z" fill="#6a6eb8" stroke="#3c3f86" stroke-width="0.4"/></g>
<g transform="translate(593,343.5) scale(1.15)"><path d="M-2.4,2.4 q0.4,-3.8 3.4,-3.2 q2,0.5 2.4,2.8" stroke="#7a7ec8" stroke-width="1.2" fill="none"/><path d="M-4,0.6 l2.8,0 l-1.6,2.6z" fill="#7a7ec8"/></g>
<rect x="602" y="339.4" width="0.5" height="8.6" fill="#b9b9b9"/>
<g transform="translate(609,343.5) scale(1.15)"><path d="M-2.6,0 h5.2" stroke="#4c4fa6" stroke-width="1.1"/></g>
<g transform="translate(620.8,343.5) scale(1.15)"><path d="M-2.8,0 h5.6 M0,-2.8 v5.6" stroke="#4c4fa6" stroke-width="1.1"/></g>
<g transform="translate(632,343.5) scale(1.15)"><path d="M-2.4,2.4 q0.4,-3.8 3.4,-3.2 q2,0.5 2.4,2.8" stroke="#7a7ec8" stroke-width="1.2" fill="none"/><path d="M-4,0.6 l2.8,0 l-1.6,2.6z" fill="#7a7ec8"/></g>
<rect x="640.8000000000001" y="339.40" width="0.8" height="0.8" fill="#666"/>
<rect x="640.8000000000001" y="341.07" width="0.8" height="0.8" fill="#666"/>
<rect x="640.8000000000001" y="342.74" width="0.8" height="0.8" fill="#666"/>
<rect x="640.8000000000001" y="344.41" width="0.8" height="0.8" fill="#666"/>
<rect x="640.8000000000001" y="346.08" width="0.8" height="0.8" fill="#666"/>
<g transform="translate(649.2,343.5) scale(1.15)"><circle cx="0" cy="0" r="2.4" fill="none" stroke="#5a7ad0" stroke-width="1.4" stroke-dasharray="1.3 0.9"/><path d="M-3.6,-3.6 l2,0 l-2,2z M3.6,3.6 l-2,0 l2,-2z" fill="#3c3f9c"/></g>
<path d="M655.7,343.29999999999995 h2.6 l-1.3,1.45z" fill="#1a1a1a"/>
<path d="M6.4,439.2 l3,-0.45 v3 h-3z M9.9,438.7 l3.8,-0.6 v3.65 h-3.8z M6.4,442.3 h3 v3 l-3,-0.45z M9.9,442.3 h3.8 v3.65 l-3.8,-0.6z" fill="#ffffff"/>
<circle cx="28.2" cy="441.9" r="3.3" fill="none" stroke="#f2f2f2" stroke-width="1"/>
<rect x="153.9" y="438.2" width="2.2" height="4.4" rx="1.1" fill="none" stroke="#cfcfcf" stroke-width="0.55"/><path d="M152.8,441.6 q0,2.2 2.2,2.2 q2.2,0 2.2,-2.2 M155,443.8 v1.6" stroke="#cfcfcf" stroke-width="0.55" fill="none"/>
<rect x="170.6" y="439.4" width="5" height="5" fill="none" stroke="#e8e8e8" stroke-width="0.6"/><path d="M169.2,440.4 v3 M177,440.4 v3" stroke="#e8e8e8" stroke-width="0.6"/>
<g transform="translate(195,441.9) scale(1.0)"><path d="M-3.6,0.6 q0,-4.6 3.8,-4.6 q3.6,0 3.6,4 v0.9 h-5.2 q0.2,1.8 2.2,1.8 q1.4,0 2.6,-0.7 v1.6 q-1.4,0.7 -3,0.7 q-3.8,0 -4,-3.7z M-1.3,-0.6 h2.9 q0,-1.7 -1.4,-1.7 q-1.3,0 -1.5,1.7z" fill="#1c8ee6" fill-rule="evenodd"/></g>
<g transform="translate(215,441.9) scale(1.0)"><path d="M-3.9,-3 h3 l0.7,0.9 h4.1 v5.6 h-7.8z" fill="#e9b63a"/><path d="M-3.9,-0.9 h7.8 v4.4 h-7.8z" fill="#f8d66a"/><path d="M-1.8,1.2 h3.6 v2.3 h-3.6z" fill="#4a9ae0"/></g>
<g transform="translate(235,441.9) scale(1.0)"><path d="M-3.6,-1.6 h7.2 v5.2 h-7.2z" fill="#f4f4f4"/><path d="M-1.6,-1.6 q0,-2 1.6,-2 q1.6,0 1.6,2" stroke="#f4f4f4" stroke-width="0.6" fill="none"/><path d="M-1.7,-0.4 h1.4 v1.4 h-1.4z M0.3,-0.4 h1.4 v1.4 h-1.4z M-1.7,1.5 h1.4 v1.4 h-1.4z M0.3,1.5 h1.4 v1.4 h-1.4z" fill="#15181c"/></g>
<g transform="translate(255.5,441.9) scale(1.0)"><path d="M-4,-1.2 l4,-2.4 l4,2.4 v4.6 h-8z" fill="#f4f4f4"/><path d="M-4,-1 l4,2.6 l4,-2.6" stroke="#15181c" stroke-width="0.6" fill="none"/></g>
<g transform="translate(276.5,441.9) scale(1.0)"><circle r="4" fill="#e8453c"/><path d="M0,0 L-3.46,-2 A4,4 0 0 0 0,4z" fill="#2da94f"/><path d="M0,0 L0,4 A4,4 0 0 0 3.46,-2z" fill="#fbbc05"/><path d="M0,0 L3.46,-2 A4,4 0 0 0 -3.46,-2z" fill="#e8453c"/><circle r="1.9" fill="#f4f4f4"/><circle r="1.5" fill="#4285f4"/></g>
<g transform="translate(297.2,441.9) scale(1.0)"><rect x="-3.6" y="-3.8" width="7.2" height="7.6" fill="#f4f6fa"/><path d="M-2.4,-3.8 q1.6,3.8 0,7.6 M2.4,-3.8 q-1.6,3.8 0,7.6" stroke="#3a6ac8" stroke-width="1.2" fill="none"/><path d="M-1.8,0 h3.6" stroke="#3a6ac8" stroke-width="0.9"/></g>
<path d="M721,442.9 l2.2,-2.2 l2.2,2.2" stroke="#f0f0f0" stroke-width="0.6" fill="none"/>
<rect x="731.6" y="439.4" width="4.8" height="3.4" fill="none" stroke="#f0f0f0" stroke-width="0.6"/><path d="M730.4,441.4 v3.2 h2.4 M733,444.6 h2.8" stroke="#f0f0f0" stroke-width="0.6" fill="none"/>
<path d="M740.6,441 h1.3 l1.6,-1.5 v4.8 l-1.6,-1.5 h-1.3z" fill="#f0f0f0"/><path d="M744.6,440.6 q1,1.3 0,2.6 M745.8,439.8 q1.6,2.1 0,4.2" stroke="#f0f0f0" stroke-width="0.5" fill="none"/>
<path d="M783.6,438.6 h6.4 v4.8 h-3.4 l-1.6,1.6 v-1.6 h-1.4z" fill="#f0f0f0"/><circle cx="789.6" cy="444" r="2.1" fill="#f0f0f0" stroke="#101214" stroke-width="0.5"/><text x="788.5" y="445.4" font-size="3.6" font-family="Liberation Sans, sans-serif" fill="#101214" font-weight="bold">2</text>
</svg>
</div></body></html>
